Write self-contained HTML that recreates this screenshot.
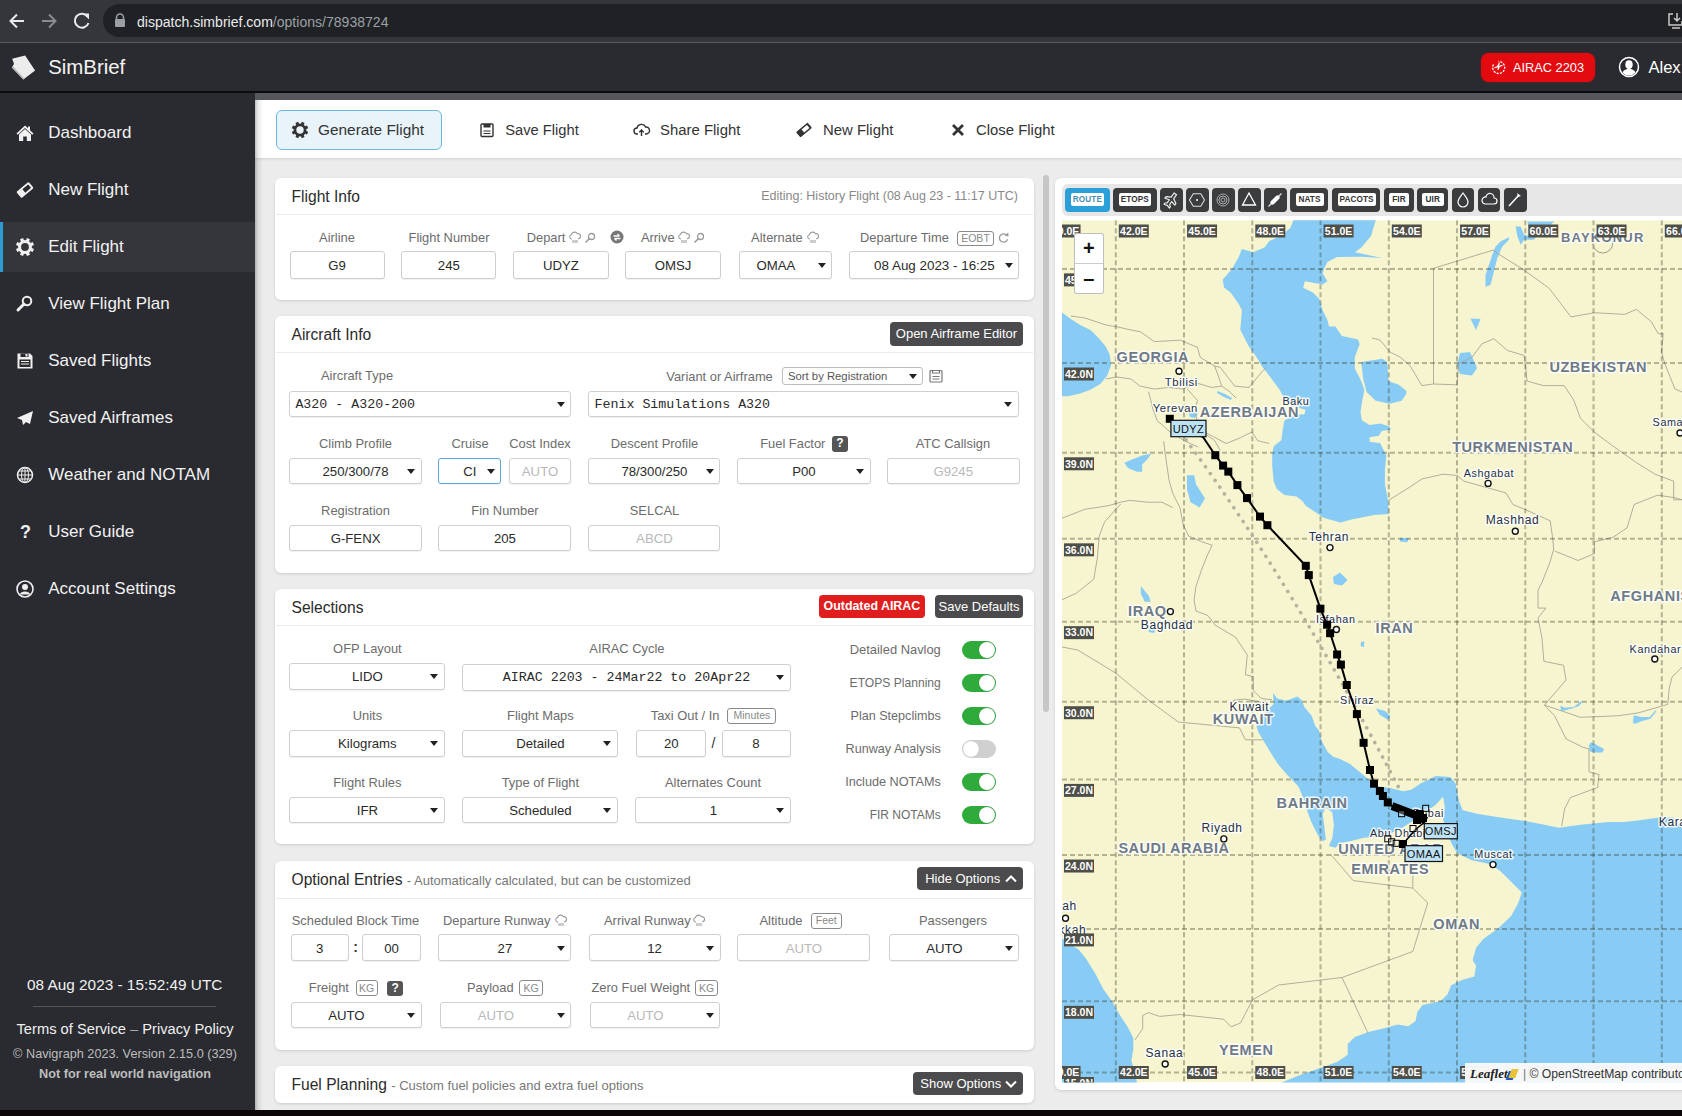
<!DOCTYPE html>
<html><head><meta charset="utf-8">
<style>
*{box-sizing:border-box;margin:0;padding:0}
html,body{width:1682px;height:1116px;overflow:hidden;background:#ececec;font-family:"Liberation Sans",sans-serif}
.a{position:absolute}
.card{background:#fff;border-radius:6px;box-shadow:0 1px 3px rgba(0,0,0,.14)}
svg{position:absolute;overflow:visible}
</style></head><body>
<div class="a" style="left:0px;top:0px;width:1682px;height:42px;background:#35363a"></div>
<div class="a" style="left:0px;top:42px;width:1682px;height:1px;background:#5b5c60"></div>
<div class="a" style="left:103px;top:4px;width:1620px;height:33px;border-radius:17px;background:#202124"></div>
<div class="a" style="left:137px;top:11.50px;height:20px;line-height:20px;font-size:14.05px;color:#e8eaed;white-space:nowrap;font-weight:normal;">dispatch.simbrief.com<span style="color:#9aa0a6">/options/78938724</span></div>
<svg style="left:0;top:0" width="100" height="42"><g stroke="#e8eaed" stroke-width="2" fill="none">
<path d="M24 21H11M17 14.5L10.5 21 17 27.5"/></g>
<g stroke="#8a8b8e" stroke-width="2" fill="none"><path d="M42 21H55M49 14.5L55.5 21 49 27.5"/></g>
<g stroke="#e8eaed" stroke-width="2" fill="none"><path d="M87.5 16.5A7 7 0 1 0 88.5 23"/></g><path d="M83 13.5L89 13.5 89 19.5Z" fill="#e8eaed"/>
</svg>
<svg style="left:114px;top:13px" width="12" height="15"><path d="M2.5 6V4.5a3.5 3.5 0 0 1 7 0V6" stroke="#9aa0a6" stroke-width="1.6" fill="none"/><rect x="1" y="6" width="10" height="8" rx="1" fill="#9aa0a6"/></svg>
<svg style="left:1664px;top:11px" width="20" height="20"><g stroke="#c8c8c8" stroke-width="1.5" fill="none"><path d="M9 3H5v11h13v-4"/><path d="M13 2v8M10 7l3 3 3-3"/><path d="M8 17h8"/></g></svg>
<div class="a" style="left:0px;top:43px;width:1682px;height:48px;background:#2a2b30"></div>
<div class="a" style="left:0px;top:91px;width:1682px;height:2px;background:#0b0b0b"></div>
<svg style="left:0;top:43px" width="48" height="48"><path d="M12.2 15.8L25.1 12.5 35.1 27.6 23.3 36.5 11.8 24.4 14 21z" fill="#ececec"/><path d="M11.8 24.4L23.3 36.5 24 35 13 23.5z" fill="#b8b8b8"/></svg>
<div class="a" style="left:48.2px;top:57.00px;height:20px;line-height:20px;font-size:20.4px;color:#f4f4f4;white-space:nowrap;font-weight:normal;">SimBrief</div>
<div class="a" style="left:1481px;top:53px;width:114px;height:29px;border-radius:8px;background:#e30b10;box-shadow:0 0 2px rgba(255,0,0,.5)"></div>
<svg style="left:1490px;top:59px" width="17" height="17"><path d="M3.5 5.5A6 6 0 1 0 8.5 2.5" stroke="#fff" stroke-width="1.3" fill="none" stroke-dasharray="2.2 1.2"/><path d="M4 8.5l3-1.2 2-3.8 1 0.3-1 3.2 3-1.2 0.8 1-3 1.2-1.5 3-1-0.2 0.6-2.5-3 1z" fill="#fff"/></svg>
<div class="a" style="left:1512.9px;top:57.50px;height:20px;line-height:20px;font-size:12.8px;color:#fff;white-space:nowrap;font-weight:normal;">AIRAC 2203</div>
<svg style="left:1618px;top:56px" width="22" height="22"><defs><clipPath id="uc"><circle cx="11" cy="11" r="8.6"/></clipPath></defs><circle cx="11" cy="11" r="9.5" stroke="#fff" stroke-width="1.5" fill="none"/><g clip-path="url(#uc)" fill="#fff"><ellipse cx="11" cy="8.6" rx="3.7" ry="4.4"/><ellipse cx="11" cy="18.8" rx="7.2" ry="6"/></g></svg>
<div class="a" style="left:1648.4px;top:57.60px;height:20px;line-height:20px;font-size:16.6px;color:#fff;white-space:nowrap;font-weight:normal;">Alex</div>
<div class="a" style="left:0px;top:93px;width:255px;height:1017px;background:#2a2b31"></div>
<div class="a" style="left:0px;top:222px;width:255px;height:50px;background:#35363c"></div>
<div class="a" style="left:0px;top:222px;width:3px;height:50px;background:#2d9bd8"></div>
<div class="a" style="left:48.2px;top:122.50px;height:20px;line-height:20px;font-size:17.0px;color:#f2f2f2;white-space:nowrap;font-weight:normal;">Dashboard</div>
<div class="a" style="left:48.2px;top:179.50px;height:20px;line-height:20px;font-size:17.0px;color:#f2f2f2;white-space:nowrap;font-weight:normal;">New Flight</div>
<div class="a" style="left:48.2px;top:236.50px;height:20px;line-height:20px;font-size:17.0px;color:#f2f2f2;white-space:nowrap;font-weight:normal;">Edit Flight</div>
<div class="a" style="left:48.2px;top:293.50px;height:20px;line-height:20px;font-size:17.0px;color:#f2f2f2;white-space:nowrap;font-weight:normal;">View Flight Plan</div>
<div class="a" style="left:48.2px;top:350.50px;height:20px;line-height:20px;font-size:17.0px;color:#f2f2f2;white-space:nowrap;font-weight:normal;">Saved Flights</div>
<div class="a" style="left:48.2px;top:407.50px;height:20px;line-height:20px;font-size:17.0px;color:#f2f2f2;white-space:nowrap;font-weight:normal;">Saved Airframes</div>
<div class="a" style="left:48.2px;top:464.50px;height:20px;line-height:20px;font-size:17.0px;color:#f2f2f2;white-space:nowrap;font-weight:normal;">Weather and NOTAM</div>
<div class="a" style="left:48.2px;top:521.50px;height:20px;line-height:20px;font-size:17.0px;color:#f2f2f2;white-space:nowrap;font-weight:normal;">User Guide</div>
<div class="a" style="left:48.2px;top:578.50px;height:20px;line-height:20px;font-size:17.0px;color:#f2f2f2;white-space:nowrap;font-weight:normal;">Account Settings</div>
<svg style="left:16px;top:123.5px" width="18" height="18"><path d="M9 1.5L0.5 9.5 1.8 10.8 9 4 16.2 10.8 17.5 9.5 14 6.2V2.5h-2v1.8z" fill="#f0f0f0"/><path d="M3 10.5L9 5l6 5.5V17h-4.2v-4.5H7.2V17H3z" fill="#f0f0f0"/></svg>
<svg style="left:16px;top:180.5px" width="18" height="18"><g transform="rotate(-40 9 9)"><rect x="1" y="5" width="16" height="8" rx="1.2" fill="#f0f0f0"/><rect x="7.5" y="6.8" width="7.5" height="4.4" fill="#2a2b31"/></g></svg>
<svg style="left:16px;top:237.5px" width="18" height="18"><path d="M15.90 9.00 L15.82 10.05 L17.99 10.97 L16.75 13.96 L14.57 13.08 L13.88 13.88 L13.08 14.57 L13.96 16.75 L10.97 17.99 L10.05 15.82 L9.00 15.90 L7.95 15.82 L7.03 17.99 L4.04 16.75 L4.92 14.57 L4.12 13.88 L3.43 13.08 L1.25 13.96 L0.01 10.97 L2.18 10.05 L2.10 9.00 L2.18 7.95 L0.01 7.03 L1.25 4.04 L3.43 4.92 L4.12 4.12 L4.92 3.43 L4.04 1.25 L7.03 0.01 L7.95 2.18 L9.00 2.10 L10.05 2.18 L10.97 0.01 L13.96 1.25 L13.08 3.43 L13.88 4.12 L14.57 4.92 L16.75 4.04 L17.99 7.03 L15.82 7.95Z M12.90 9.00 A3.9 3.9 0 1 0 5.10 9.00 A3.9 3.9 0 1 0 12.90 9.00Z" fill="#f0f0f0" fill-rule="evenodd"/></svg>
<svg style="left:16px;top:294.5px" width="18" height="18"><circle cx="11" cy="6" r="4.3" stroke="#f0f0f0" stroke-width="2" fill="none"/><path d="M8 9L2 15" stroke="#f0f0f0" stroke-width="3" stroke-linecap="round"/></svg>
<svg style="left:16px;top:351.5px" width="18" height="18"><path d="M1.5 1.5h12.5l2.5 2.5v12.5h-15z" fill="#f0f0f0"/><rect x="4.5" y="1.5" width="8" height="3.5" fill="#2a2b31"/><rect x="9.5" y="2" width="2" height="2.5" fill="#f0f0f0"/><rect x="3.5" y="7.5" width="11" height="7.5" fill="#2a2b31"/><path d="M5 9.5h8M5 12h8" stroke="#f0f0f0" stroke-width="1.2"/></svg>
<svg style="left:16px;top:408.5px" width="18" height="18"><path d="M17 2L1 9l5 2 1 5 3-3 4 2z" fill="#f0f0f0"/></svg>
<svg style="left:16px;top:465.5px" width="18" height="18"><circle cx="9" cy="9" r="7.5" stroke="#f0f0f0" stroke-width="1.5" fill="none"/><path d="M1.5 9h15M9 1.5v15M3 5h12M3 13h12" stroke="#f0f0f0" stroke-width="1"/><ellipse cx="9" cy="9" rx="3.5" ry="7.5" stroke="#f0f0f0" stroke-width="1" fill="none"/></svg>
<svg style="left:16px;top:522.5px" width="18" height="18"><text x="4" y="15" font-size="18" font-weight="bold" fill="#f0f0f0" font-family="Liberation Sans">?</text></svg>
<svg style="left:16px;top:579.5px" width="18" height="18"><circle cx="9" cy="9" r="8" stroke="#f0f0f0" stroke-width="1.6" fill="none"/><circle cx="9" cy="7" r="3" fill="#f0f0f0"/><path d="M3.5 14.5a6 5 0 0 1 11 0" fill="#f0f0f0"/></svg>
<div class="a" style="left:-0.30px;top:975.30px;width:250px;text-align:center;height:20px;line-height:20px;font-size:15.35px;color:#f0f0f0;white-space:nowrap;font-weight:normal;">08 Aug 2023 - 15:52:49 UTC</div>
<div class="a" style="left:33px;top:1006px;width:183px;height:1px;background:#55565b"></div>
<div class="a" style="left:0.10px;top:1019.00px;width:250px;text-align:center;height:20px;line-height:20px;font-size:14.7px;color:#f0f0f0;white-space:nowrap;font-weight:normal;">Terms of Service <span style="color:#aaa">–</span> Privacy Policy</div>
<div class="a" style="left:0.00px;top:1043.80px;width:250px;text-align:center;height:20px;line-height:20px;font-size:12.7px;color:#bdbdbd;white-space:nowrap;font-weight:normal;">© Navigraph 2023. Version 2.15.0 (329)</div>
<div class="a" style="left:0.00px;top:1063.50px;width:250px;text-align:center;height:20px;line-height:20px;font-size:12.7px;color:#bdbdbd;white-space:nowrap;font-weight:bold;">Not for real world navigation</div>
<div class="a" style="left:0px;top:1110px;width:1682px;height:6px;background:#0b0709"></div>
<div class="a" style="left:255px;top:93px;width:1427px;height:7px;background:#55575b"></div>
<div class="a" style="left:255px;top:100px;width:1427px;height:58px;background:#fff;box-shadow:0 1px 3px rgba(0,0,0,.12)"></div>
<div class="a" style="left:275.5px;top:109.5px;width:166px;height:40px;border:1.5px solid #6cb8dd;border-radius:6px;background:#e9f3fa"></div>
<div class="a" style="left:318px;top:120.00px;height:20px;line-height:20px;font-size:15.4px;color:#333;white-space:nowrap;font-weight:normal;">Generate Flight</div>
<div class="a" style="left:505.3px;top:120.00px;height:20px;line-height:20px;font-size:14.7px;color:#333;white-space:nowrap;font-weight:normal;">Save Flight</div>
<div class="a" style="left:660.1px;top:120.00px;height:20px;line-height:20px;font-size:14.9px;color:#333;white-space:nowrap;font-weight:normal;">Share Flight</div>
<div class="a" style="left:823px;top:120.00px;height:20px;line-height:20px;font-size:14.9px;color:#333;white-space:nowrap;font-weight:normal;">New Flight</div>
<div class="a" style="left:976px;top:120.00px;height:20px;line-height:20px;font-size:14.9px;color:#333;white-space:nowrap;font-weight:normal;">Close Flight</div>
<svg style="left:291px;top:121px" width="18" height="18"><path d="M15.40 9.00 L15.33 9.98 L17.20 10.80 L16.07 13.53 L14.16 12.78 L13.53 13.53 L12.78 14.16 L13.53 16.07 L10.80 17.20 L9.98 15.33 L9.00 15.40 L8.02 15.33 L7.20 17.20 L4.47 16.07 L5.22 14.16 L4.47 13.53 L3.84 12.78 L1.93 13.53 L0.80 10.80 L2.67 9.98 L2.60 9.00 L2.67 8.02 L0.80 7.20 L1.93 4.47 L3.84 5.22 L4.47 4.47 L5.22 3.84 L4.47 1.93 L7.20 0.80 L8.02 2.67 L9.00 2.60 L9.98 2.67 L10.80 0.80 L13.53 1.93 L12.78 3.84 L13.53 4.47 L14.16 5.22 L16.07 4.47 L17.20 7.20 L15.33 8.02Z M12.70 9.00 A3.7 3.7 0 1 0 5.30 9.00 A3.7 3.7 0 1 0 12.70 9.00Z" fill="#333" fill-rule="evenodd"/></svg>
<svg style="left:480px;top:123px" width="15" height="15"><rect x="1" y="1" width="12" height="12.5" rx="1" stroke="#333" stroke-width="1.4" fill="none"/><path d="M3.5 1h7v3.5h-7z" fill="#333"/><path d="M3.5 8h7M3.5 10.5h7" stroke="#333" stroke-width="1"/></svg>
<svg style="left:633px;top:122px" width="18" height="16"><path d="M5 12H4a3 3 0 0 1 0-6 4.5 4.5 0 0 1 8.5-1 3.5 3.5 0 0 1 1 7h-1.5" stroke="#333" stroke-width="1.4" fill="none"/><path d="M8.5 14V8M6.3 10.2l2.2-2.2 2.2 2.2" stroke="#333" stroke-width="1.4" fill="none"/></svg>
<svg style="left:796px;top:122px" width="16" height="16"><g transform="rotate(-40 8 8)"><rect x="0.5" y="4.5" width="15" height="7" rx="1" fill="#333"/><rect x="6.5" y="6" width="7" height="4" fill="#fff"/></g></svg>
<svg style="left:951px;top:123px" width="14" height="14"><path d="M2 2l10 10M12 2L2 12" stroke="#333" stroke-width="2.8"/></svg>
<div class="a card" style="left:275px;top:178px;width:759px;height:122px"></div>
<div class="a" style="left:276px;top:214px;width:757px;height:1px;background:#ebebeb"></div>
<div class="a" style="left:291.5px;top:186.80px;height:20px;line-height:20px;font-size:15.6px;color:#2b2b2b;white-space:nowrap;font-weight:normal;">Flight Info</div>
<div class="a" style="left:718.00px;top:185.70px;width:300px;text-align:right;height:20px;line-height:20px;font-size:12.5px;color:#888;white-space:nowrap;font-weight:normal;">Editing: History Flight (08 Aug 23 - 11:17 UTC)</div>
<div class="a" style="left:277.00px;top:227.70px;width:120px;text-align:center;height:20px;line-height:20px;font-size:12.9px;color:#6c6c6c;white-space:nowrap;font-weight:normal;">Airline</div>
<div class="a" style="left:389.00px;top:227.70px;width:120px;text-align:center;height:20px;line-height:20px;font-size:12.9px;color:#6c6c6c;white-space:nowrap;font-weight:normal;">Flight Number</div>
<div class="a" style="left:526.7px;top:227.70px;height:20px;line-height:20px;font-size:12.9px;color:#6c6c6c;white-space:nowrap;font-weight:normal;">Depart</div>
<div class="a" style="left:640.9px;top:227.70px;height:20px;line-height:20px;font-size:12.9px;color:#6c6c6c;white-space:nowrap;font-weight:normal;">Arrive</div>
<div class="a" style="left:751.1px;top:227.70px;height:20px;line-height:20px;font-size:12.9px;color:#6c6c6c;white-space:nowrap;font-weight:normal;">Alternate</div>
<div class="a" style="left:860px;top:227.70px;height:20px;line-height:20px;font-size:12.9px;color:#6c6c6c;white-space:nowrap;font-weight:normal;">Departure Time</div>
<div class="a" style="left:957px;top:231px;width:37px;height:15px;border:1px solid #8a8a8a;border-radius:3px;color:#8a8a8a;font-size:10.5px;line-height:13px;text-align:center;white-space:nowrap">EOBT</div>
<svg style="left:569px;top:232px" width="12" height="12"><path d="M3 7H2.5a2.3 2.3 0 0 1 0-4.5 3.3 3.3 0 0 1 6-.8 2.5 2.5 0 0 1 1 5H9" stroke="#999" stroke-width="1.1" fill="none"/><path d="M4 8v3M6 8v3M8 8v3" stroke="#999" stroke-width="1"/></svg>
<svg style="left:584px;top:232px" width="12" height="12"><circle cx="7.5" cy="4.5" r="3" stroke="#999" stroke-width="1.3" fill="none"/><path d="M5.5 6.5L1.5 10.5" stroke="#999" stroke-width="1.6"/></svg>
<svg style="left:678px;top:232px" width="12" height="12"><path d="M3 7H2.5a2.3 2.3 0 0 1 0-4.5 3.3 3.3 0 0 1 6-.8 2.5 2.5 0 0 1 1 5H9" stroke="#999" stroke-width="1.1" fill="none"/><path d="M4 8v3M6 8v3M8 8v3" stroke="#999" stroke-width="1"/></svg>
<svg style="left:693px;top:232px" width="12" height="12"><circle cx="7.5" cy="4.5" r="3" stroke="#999" stroke-width="1.3" fill="none"/><path d="M5.5 6.5L1.5 10.5" stroke="#999" stroke-width="1.6"/></svg>
<svg style="left:807px;top:232px" width="12" height="12"><path d="M3 7H2.5a2.3 2.3 0 0 1 0-4.5 3.3 3.3 0 0 1 6-.8 2.5 2.5 0 0 1 1 5H9" stroke="#999" stroke-width="1.1" fill="none"/><path d="M4 8v3M6 8v3M8 8v3" stroke="#999" stroke-width="1"/></svg>
<svg style="left:997px;top:231px" width="13" height="13"><path d="M10.3 5A4.2 4.2 0 1 0 10.6 8.3" stroke="#999" stroke-width="1.3" fill="none"/><path d="M7.6 4.8L11.6 5.6 11.2 1.6z" fill="#999"/></svg>
<svg style="left:610px;top:230px" width="14" height="14"><circle cx="7" cy="7" r="6.5" fill="#777"/><path d="M3.5 6h6M7.5 4l2 2M10.5 8.5h-6M6.5 10.5l-2-2" stroke="#fff" stroke-width="1.3" fill="none"/></svg>
<div class="a" style="left:289.5px;top:251px;width:95.0px;height:27.5px;border:1px solid #cfcfcf;border-radius:3px;background:#fff;box-shadow:0 1px 1px rgba(0,0,0,.06)"></div>
<div class="a" style="left:289.50px;top:255.55px;width:95.0px;text-align:center;height:20px;line-height:20px;font-size:13.2px;color:#2a2a2a;white-space:nowrap;font-weight:normal;">G9</div>
<div class="a" style="left:401.2px;top:251px;width:95.30000000000001px;height:27.5px;border:1px solid #cfcfcf;border-radius:3px;background:#fff;box-shadow:0 1px 1px rgba(0,0,0,.06)"></div>
<div class="a" style="left:401.20px;top:255.55px;width:95.30000000000001px;text-align:center;height:20px;line-height:20px;font-size:13.2px;color:#2a2a2a;white-space:nowrap;font-weight:normal;">245</div>
<div class="a" style="left:513.4px;top:251px;width:95.20000000000005px;height:27.5px;border:1px solid #cfcfcf;border-radius:3px;background:#fff;box-shadow:0 1px 1px rgba(0,0,0,.06)"></div>
<div class="a" style="left:513.40px;top:255.55px;width:95.20000000000005px;text-align:center;height:20px;line-height:20px;font-size:13.2px;color:#2a2a2a;white-space:nowrap;font-weight:normal;">UDYZ</div>
<div class="a" style="left:625.4px;top:251px;width:95.20000000000005px;height:27.5px;border:1px solid #cfcfcf;border-radius:3px;background:#fff;box-shadow:0 1px 1px rgba(0,0,0,.06)"></div>
<div class="a" style="left:625.40px;top:255.55px;width:95.20000000000005px;text-align:center;height:20px;line-height:20px;font-size:13.2px;color:#2a2a2a;white-space:nowrap;font-weight:normal;">OMSJ</div>
<div class="a" style="left:739.4px;top:251px;width:93.10000000000002px;height:27.5px;border:1px solid #cfcfcf;border-radius:3px;background:#fff;box-shadow:0 1px 1px rgba(0,0,0,.06)"></div>
<div class="a" style="left:729.40px;top:255.55px;width:93.10000000000002px;text-align:center;height:20px;line-height:20px;font-size:13.2px;color:#2a2a2a;white-space:nowrap;font-weight:normal;">OMAA</div>
<div class="a" style="left:817.5px;top:262.8px;width:0;height:0;border-left:4.5px solid transparent;border-right:4.5px solid transparent;border-top:5.5px solid #222"></div>
<div class="a" style="left:849.3px;top:251px;width:170.20000000000005px;height:27.5px;border:1px solid #cfcfcf;border-radius:3px;background:#fff;box-shadow:0 1px 1px rgba(0,0,0,.06)"></div>
<div class="a" style="left:849.30px;top:255.55px;width:170.20000000000005px;text-align:center;height:20px;line-height:20px;font-size:13.4px;color:#2a2a2a;white-space:nowrap;font-weight:normal;">08 Aug 2023 - 16:25</div>
<div class="a" style="left:1004.5px;top:262.8px;width:0;height:0;border-left:4.5px solid transparent;border-right:4.5px solid transparent;border-top:5.5px solid #222"></div>
<div class="a card" style="left:275px;top:316px;width:759px;height:256.5px"></div>
<div class="a" style="left:276px;top:352.3px;width:757px;height:1.0px;background:#ebebeb"></div>
<div class="a" style="left:291.5px;top:324.50px;height:20px;line-height:20px;font-size:15.6px;color:#2b2b2b;white-space:nowrap;font-weight:normal;">Aircraft Info</div>
<div class="a" style="left:890px;top:322px;width:133px;height:23.5px;background:#4b4b4d;border-radius:4px;color:#fff;font-size:13px;line-height:23.5px;text-align:center;white-space:nowrap;">Open Airframe Editor</div>
<div class="a" style="left:257.00px;top:365.80px;width:200px;text-align:center;height:20px;line-height:20px;font-size:12.9px;color:#6c6c6c;white-space:nowrap;font-weight:normal;">Aircraft Type</div>
<div class="a" style="left:572.80px;top:366.50px;width:200px;text-align:right;height:20px;line-height:20px;font-size:12.9px;color:#6c6c6c;white-space:nowrap;font-weight:normal;">Variant or Airframe</div>
<div class="a" style="left:782.3px;top:367.3px;width:141px;height:17.3px;border:1px solid #bdbdbd;border-radius:3px;background:#fff"></div>
<div class="a" style="left:788px;top:366.00px;height:20px;line-height:20px;font-size:11.3px;color:#555;white-space:nowrap;font-weight:normal;">Sort by Registration</div>
<div class="a" style="left:909px;top:374px;width:0;height:0;border-left:4px solid transparent;border-right:4px solid transparent;border-top:5px solid #222"></div>
<svg style="left:929px;top:369px" width="14" height="14"><rect x="1" y="1.5" width="12" height="11.5" rx="1" stroke="#777" stroke-width="1.2" fill="none"/><path d="M3.5 1v3h7V1" stroke="#777" stroke-width="1.2" fill="none"/><path d="M3.5 7.5h7M3.5 10h7" stroke="#777" stroke-width="1"/></svg>
<div class="a" style="left:289.4px;top:390.6px;width:282.1px;height:26.599999999999966px;border:1px solid #cfcfcf;border-radius:3px;background:#fff;box-shadow:0 1px 1px rgba(0,0,0,.06)"></div>
<div class="a" style="left:295.4px;top:394.70px;height:20px;line-height:20px;font-size:13.3px;color:#2a2a2a;white-space:nowrap;font-weight:normal;font-family:'Liberation Mono',monospace;">A320 - A320-200</div>
<div class="a" style="left:556.5px;top:401.9px;width:0;height:0;border-left:4.5px solid transparent;border-right:4.5px solid transparent;border-top:5.5px solid #222"></div>
<div class="a" style="left:588.4px;top:390.6px;width:430.80000000000007px;height:26.599999999999966px;border:1px solid #cfcfcf;border-radius:3px;background:#fff;box-shadow:0 1px 1px rgba(0,0,0,.06)"></div>
<div class="a" style="left:594.5px;top:394.70px;height:20px;line-height:20px;font-size:13.3px;color:#2a2a2a;white-space:nowrap;font-weight:normal;font-family:'Liberation Mono',monospace;">Fenix Simulations A320</div>
<div class="a" style="left:1004.2px;top:401.9px;width:0;height:0;border-left:4.5px solid transparent;border-right:4.5px solid transparent;border-top:5.5px solid #222"></div>
<div class="a" style="left:255.50px;top:433.80px;width:200px;text-align:center;height:20px;line-height:20px;font-size:12.9px;color:#6c6c6c;white-space:nowrap;font-weight:normal;">Climb Profile</div>
<div class="a" style="left:420.00px;top:433.80px;width:100px;text-align:center;height:20px;line-height:20px;font-size:12.9px;color:#6c6c6c;white-space:nowrap;font-weight:normal;">Cruise</div>
<div class="a" style="left:490.00px;top:433.80px;width:100px;text-align:center;height:20px;line-height:20px;font-size:12.9px;color:#6c6c6c;white-space:nowrap;font-weight:normal;">Cost Index</div>
<div class="a" style="left:554.50px;top:433.80px;width:200px;text-align:center;height:20px;line-height:20px;font-size:12.9px;color:#6c6c6c;white-space:nowrap;font-weight:normal;">Descent Profile</div>
<div class="a" style="left:760.2px;top:433.80px;height:20px;line-height:20px;font-size:12.9px;color:#6c6c6c;white-space:nowrap;font-weight:normal;">Fuel Factor</div>
<div class="a" style="left:832.3px;top:436.3px;width:15.400000000000091px;height:15.699999999999989px;background:#555;border-radius:3px;color:#fff;font-size:12px;font-weight:bold;line-height:15.699999999999989px;text-align:center">?</div>
<div class="a" style="left:853.00px;top:433.80px;width:200px;text-align:center;height:20px;line-height:20px;font-size:12.9px;color:#6c6c6c;white-space:nowrap;font-weight:normal;">ATC Callsign</div>
<div class="a" style="left:289.4px;top:457.6px;width:132.3px;height:26.799999999999955px;border:1px solid #cfcfcf;border-radius:3px;background:#fff;box-shadow:0 1px 1px rgba(0,0,0,.06)"></div>
<div class="a" style="left:289.40px;top:461.80px;width:132.3px;text-align:center;height:20px;line-height:20px;font-size:13.2px;color:#2a2a2a;white-space:nowrap;font-weight:normal;">250/300/78</div>
<div class="a" style="left:406.7px;top:469.0px;width:0;height:0;border-left:4.5px solid transparent;border-right:4.5px solid transparent;border-top:5.5px solid #222"></div>
<div class="a" style="left:438.4px;top:457.6px;width:63.10000000000002px;height:26.799999999999955px;border:1px solid #5aa9d6;border-radius:3px;background:#fff;box-shadow:0 1px 1px rgba(0,0,0,.06)"></div>
<div class="a" style="left:438.40px;top:461.80px;width:63.10000000000002px;text-align:center;height:20px;line-height:20px;font-size:13.2px;color:#2a2a2a;white-space:nowrap;font-weight:normal;">CI</div>
<div class="a" style="left:486.5px;top:469.0px;width:0;height:0;border-left:4.5px solid transparent;border-right:4.5px solid transparent;border-top:5.5px solid #222"></div>
<div class="a" style="left:508.6px;top:457.6px;width:62.89999999999998px;height:26.799999999999955px;border:1px solid #cfcfcf;border-radius:3px;background:#fff;box-shadow:0 1px 1px rgba(0,0,0,.06)"></div>
<div class="a" style="left:508.60px;top:461.80px;width:62.89999999999998px;text-align:center;height:20px;line-height:20px;font-size:13.2px;color:#b8b8b8;white-space:nowrap;font-weight:normal;">AUTO</div>
<div class="a" style="left:588.4px;top:457.6px;width:132.10000000000002px;height:26.799999999999955px;border:1px solid #cfcfcf;border-radius:3px;background:#fff;box-shadow:0 1px 1px rgba(0,0,0,.06)"></div>
<div class="a" style="left:588.40px;top:461.80px;width:132.10000000000002px;text-align:center;height:20px;line-height:20px;font-size:13.2px;color:#2a2a2a;white-space:nowrap;font-weight:normal;">78/300/250</div>
<div class="a" style="left:705.5px;top:469.0px;width:0;height:0;border-left:4.5px solid transparent;border-right:4.5px solid transparent;border-top:5.5px solid #222"></div>
<div class="a" style="left:737.3px;top:457.6px;width:133.30000000000007px;height:26.799999999999955px;border:1px solid #cfcfcf;border-radius:3px;background:#fff;box-shadow:0 1px 1px rgba(0,0,0,.06)"></div>
<div class="a" style="left:737.30px;top:461.80px;width:133.30000000000007px;text-align:center;height:20px;line-height:20px;font-size:13.2px;color:#2a2a2a;white-space:nowrap;font-weight:normal;">P00</div>
<div class="a" style="left:855.6px;top:469.0px;width:0;height:0;border-left:4.5px solid transparent;border-right:4.5px solid transparent;border-top:5.5px solid #222"></div>
<div class="a" style="left:887px;top:457.6px;width:132.5px;height:26.799999999999955px;border:1px solid #cfcfcf;border-radius:3px;background:#fff;box-shadow:0 1px 1px rgba(0,0,0,.06)"></div>
<div class="a" style="left:887.00px;top:461.80px;width:132.5px;text-align:center;height:20px;line-height:20px;font-size:13.2px;color:#b8b8b8;white-space:nowrap;font-weight:normal;">G9245</div>
<div class="a" style="left:255.50px;top:500.80px;width:200px;text-align:center;height:20px;line-height:20px;font-size:12.9px;color:#6c6c6c;white-space:nowrap;font-weight:normal;">Registration</div>
<div class="a" style="left:405.00px;top:500.80px;width:200px;text-align:center;height:20px;line-height:20px;font-size:12.9px;color:#6c6c6c;white-space:nowrap;font-weight:normal;">Fin Number</div>
<div class="a" style="left:554.50px;top:500.80px;width:200px;text-align:center;height:20px;line-height:20px;font-size:12.9px;color:#6c6c6c;white-space:nowrap;font-weight:normal;">SELCAL</div>
<div class="a" style="left:289.4px;top:524.6px;width:132.3px;height:26.600000000000023px;border:1px solid #cfcfcf;border-radius:3px;background:#fff;box-shadow:0 1px 1px rgba(0,0,0,.06)"></div>
<div class="a" style="left:289.40px;top:528.70px;width:132.3px;text-align:center;height:20px;line-height:20px;font-size:13.2px;color:#2a2a2a;white-space:nowrap;font-weight:normal;">G-FENX</div>
<div class="a" style="left:438.4px;top:524.6px;width:133.10000000000002px;height:26.600000000000023px;border:1px solid #cfcfcf;border-radius:3px;background:#fff;box-shadow:0 1px 1px rgba(0,0,0,.06)"></div>
<div class="a" style="left:438.40px;top:528.70px;width:133.10000000000002px;text-align:center;height:20px;line-height:20px;font-size:13.2px;color:#2a2a2a;white-space:nowrap;font-weight:normal;">205</div>
<div class="a" style="left:588.4px;top:524.6px;width:132.10000000000002px;height:26.600000000000023px;border:1px solid #cfcfcf;border-radius:3px;background:#fff;box-shadow:0 1px 1px rgba(0,0,0,.06)"></div>
<div class="a" style="left:588.40px;top:528.70px;width:132.10000000000002px;text-align:center;height:20px;line-height:20px;font-size:13.2px;color:#b8b8b8;white-space:nowrap;font-weight:normal;">ABCD</div>
<div class="a card" style="left:275px;top:589.2px;width:759px;height:255.29999999999995px"></div>
<div class="a" style="left:276px;top:625.2px;width:757px;height:1.0px;background:#ebebeb"></div>
<div class="a" style="left:291.5px;top:597.50px;height:20px;line-height:20px;font-size:15.6px;color:#2b2b2b;white-space:nowrap;font-weight:normal;">Selections</div>
<div class="a" style="left:819.1px;top:595.3px;width:105.60000000000002px;height:23.0px;background:#e01e1e;border-radius:4px;color:#fff;font-size:12.4px;line-height:23.0px;text-align:center;white-space:nowrap;font-weight:bold">Outdated AIRAC</div>
<div class="a" style="left:935.2px;top:595.3px;width:87.69999999999993px;height:23.0px;background:#4b4b4d;border-radius:4px;color:#fff;font-size:13px;line-height:23.0px;text-align:center;white-space:nowrap;">Save Defaults</div>
<div class="a" style="left:267.40px;top:639.00px;width:200px;text-align:center;height:20px;line-height:20px;font-size:12.9px;color:#6c6c6c;white-space:nowrap;font-weight:normal;">OFP Layout</div>
<div class="a" style="left:526.90px;top:639.00px;width:200px;text-align:center;height:20px;line-height:20px;font-size:12.9px;color:#6c6c6c;white-space:nowrap;font-weight:normal;">AIRAC Cycle</div>
<div class="a" style="left:289.4px;top:662.5px;width:156.0px;height:27.100000000000023px;border:1px solid #cfcfcf;border-radius:3px;background:#fff;box-shadow:0 1px 1px rgba(0,0,0,.06)"></div>
<div class="a" style="left:289.40px;top:666.85px;width:156.0px;text-align:center;height:20px;line-height:20px;font-size:13.2px;color:#2a2a2a;white-space:nowrap;font-weight:normal;">LIDO</div>
<div class="a" style="left:430.4px;top:674.0px;width:0;height:0;border-left:4.5px solid transparent;border-right:4.5px solid transparent;border-top:5.5px solid #222"></div>
<div class="a" style="left:462.4px;top:663.5px;width:328.9px;height:27.100000000000023px;border:1px solid #cfcfcf;border-radius:3px;background:#fff;box-shadow:0 1px 1px rgba(0,0,0,.06)"></div>
<div class="a" style="left:502.8px;top:667.85px;height:20px;line-height:20px;font-size:13.3px;color:#2a2a2a;white-space:nowrap;font-weight:normal;font-family:'Liberation Mono',monospace;">AIRAC 2203 - 24Mar22 to 20Apr22</div>
<div class="a" style="left:776.3px;top:675.0px;width:0;height:0;border-left:4.5px solid transparent;border-right:4.5px solid transparent;border-top:5.5px solid #222"></div>
<div class="a" style="left:267.40px;top:706.00px;width:200px;text-align:center;height:20px;line-height:20px;font-size:12.9px;color:#6c6c6c;white-space:nowrap;font-weight:normal;">Units</div>
<div class="a" style="left:440.40px;top:706.00px;width:200px;text-align:center;height:20px;line-height:20px;font-size:12.9px;color:#6c6c6c;white-space:nowrap;font-weight:normal;">Flight Maps</div>
<div class="a" style="left:650.7px;top:706.00px;height:20px;line-height:20px;font-size:12.9px;color:#6c6c6c;white-space:nowrap;font-weight:normal;">Taxi Out / In</div>
<div class="a" style="left:727.4px;top:708.3px;width:49.0px;height:15.400000000000091px;border:1px solid #8a8a8a;border-radius:3px;color:#8a8a8a;font-size:10.5px;line-height:13.400000000000091px;text-align:center;white-space:nowrap">Minutes</div>
<div class="a" style="left:289.4px;top:729.5px;width:156.0px;height:27.100000000000023px;border:1px solid #cfcfcf;border-radius:3px;background:#fff;box-shadow:0 1px 1px rgba(0,0,0,.06)"></div>
<div class="a" style="left:289.40px;top:733.85px;width:156.0px;text-align:center;height:20px;line-height:20px;font-size:13.2px;color:#2a2a2a;white-space:nowrap;font-weight:normal;">Kilograms</div>
<div class="a" style="left:430.4px;top:741.0px;width:0;height:0;border-left:4.5px solid transparent;border-right:4.5px solid transparent;border-top:5.5px solid #222"></div>
<div class="a" style="left:462.4px;top:729.5px;width:156.0px;height:27.100000000000023px;border:1px solid #cfcfcf;border-radius:3px;background:#fff;box-shadow:0 1px 1px rgba(0,0,0,.06)"></div>
<div class="a" style="left:462.40px;top:733.85px;width:156.0px;text-align:center;height:20px;line-height:20px;font-size:13.2px;color:#2a2a2a;white-space:nowrap;font-weight:normal;">Detailed</div>
<div class="a" style="left:603.4px;top:741.0px;width:0;height:0;border-left:4.5px solid transparent;border-right:4.5px solid transparent;border-top:5.5px solid #222"></div>
<div class="a" style="left:636.1px;top:729.5px;width:70.29999999999995px;height:27.100000000000023px;border:1px solid #cfcfcf;border-radius:3px;background:#fff;box-shadow:0 1px 1px rgba(0,0,0,.06)"></div>
<div class="a" style="left:636.10px;top:733.85px;width:70.29999999999995px;text-align:center;height:20px;line-height:20px;font-size:13.2px;color:#2a2a2a;white-space:nowrap;font-weight:normal;">20</div>
<div class="a" style="left:703.50px;top:733.00px;width:20px;text-align:center;height:20px;line-height:20px;font-size:14px;color:#333;white-space:nowrap;font-weight:normal;">/</div>
<div class="a" style="left:721.5px;top:729.5px;width:69.0px;height:27.100000000000023px;border:1px solid #cfcfcf;border-radius:3px;background:#fff;box-shadow:0 1px 1px rgba(0,0,0,.06)"></div>
<div class="a" style="left:721.50px;top:733.85px;width:69.0px;text-align:center;height:20px;line-height:20px;font-size:13.2px;color:#2a2a2a;white-space:nowrap;font-weight:normal;">8</div>
<div class="a" style="left:267.40px;top:772.80px;width:200px;text-align:center;height:20px;line-height:20px;font-size:12.9px;color:#6c6c6c;white-space:nowrap;font-weight:normal;">Flight Rules</div>
<div class="a" style="left:440.40px;top:772.80px;width:200px;text-align:center;height:20px;line-height:20px;font-size:12.9px;color:#6c6c6c;white-space:nowrap;font-weight:normal;">Type of Flight</div>
<div class="a" style="left:613.00px;top:772.80px;width:200px;text-align:center;height:20px;line-height:20px;font-size:12.9px;color:#6c6c6c;white-space:nowrap;font-weight:normal;">Alternates Count</div>
<div class="a" style="left:289.4px;top:796.6px;width:156.0px;height:26.799999999999955px;border:1px solid #cfcfcf;border-radius:3px;background:#fff;box-shadow:0 1px 1px rgba(0,0,0,.06)"></div>
<div class="a" style="left:289.40px;top:800.80px;width:156.0px;text-align:center;height:20px;line-height:20px;font-size:13.2px;color:#2a2a2a;white-space:nowrap;font-weight:normal;">IFR</div>
<div class="a" style="left:430.4px;top:808.0px;width:0;height:0;border-left:4.5px solid transparent;border-right:4.5px solid transparent;border-top:5.5px solid #222"></div>
<div class="a" style="left:462.4px;top:796.6px;width:156.0px;height:26.799999999999955px;border:1px solid #cfcfcf;border-radius:3px;background:#fff;box-shadow:0 1px 1px rgba(0,0,0,.06)"></div>
<div class="a" style="left:462.40px;top:800.80px;width:156.0px;text-align:center;height:20px;line-height:20px;font-size:13.2px;color:#2a2a2a;white-space:nowrap;font-weight:normal;">Scheduled</div>
<div class="a" style="left:603.4px;top:808.0px;width:0;height:0;border-left:4.5px solid transparent;border-right:4.5px solid transparent;border-top:5.5px solid #222"></div>
<div class="a" style="left:635.3px;top:796.6px;width:156.0px;height:26.799999999999955px;border:1px solid #cfcfcf;border-radius:3px;background:#fff;box-shadow:0 1px 1px rgba(0,0,0,.06)"></div>
<div class="a" style="left:635.30px;top:800.80px;width:156.0px;text-align:center;height:20px;line-height:20px;font-size:13.2px;color:#2a2a2a;white-space:nowrap;font-weight:normal;">1</div>
<div class="a" style="left:776.3px;top:808.0px;width:0;height:0;border-left:4.5px solid transparent;border-right:4.5px solid transparent;border-top:5.5px solid #222"></div>
<div class="a" style="left:740.80px;top:639.80px;width:200px;text-align:right;height:20px;line-height:20px;font-size:12.9px;color:#6c6c6c;white-space:nowrap;font-weight:normal;">Detailed Navlog</div>
<div class="a" style="left:962px;top:640.8px;width:34px;height:18px;border-radius:9px;background:#2eab3a"></div>
<div class="a" style="left:979px;top:641.8px;width:16px;height:16px;border-radius:50%;background:#fff;box-shadow:0 0 1px rgba(0,0,0,.3)"></div>
<div class="a" style="left:740.80px;top:672.80px;width:200px;text-align:right;height:20px;line-height:20px;font-size:12.1px;color:#6c6c6c;white-space:nowrap;font-weight:normal;">ETOPS Planning</div>
<div class="a" style="left:962px;top:673.8px;width:34px;height:18px;border-radius:9px;background:#2eab3a"></div>
<div class="a" style="left:979px;top:674.8px;width:16px;height:16px;border-radius:50%;background:#fff;box-shadow:0 0 1px rgba(0,0,0,.3)"></div>
<div class="a" style="left:740.80px;top:705.80px;width:200px;text-align:right;height:20px;line-height:20px;font-size:12.6px;color:#6c6c6c;white-space:nowrap;font-weight:normal;">Plan Stepclimbs</div>
<div class="a" style="left:962px;top:706.8px;width:34px;height:18px;border-radius:9px;background:#2eab3a"></div>
<div class="a" style="left:979px;top:707.8px;width:16px;height:16px;border-radius:50%;background:#fff;box-shadow:0 0 1px rgba(0,0,0,.3)"></div>
<div class="a" style="left:740.80px;top:738.80px;width:200px;text-align:right;height:20px;line-height:20px;font-size:12.6px;color:#6c6c6c;white-space:nowrap;font-weight:normal;">Runway Analysis</div>
<div class="a" style="left:962px;top:739.8px;width:34px;height:18px;border-radius:9px;background:#d0d0d0"></div>
<div class="a" style="left:963px;top:740.8px;width:16px;height:16px;border-radius:50%;background:#fff;box-shadow:0 0 1px rgba(0,0,0,.3)"></div>
<div class="a" style="left:740.80px;top:771.80px;width:200px;text-align:right;height:20px;line-height:20px;font-size:12.7px;color:#6c6c6c;white-space:nowrap;font-weight:normal;">Include NOTAMs</div>
<div class="a" style="left:962px;top:772.8px;width:34px;height:18px;border-radius:9px;background:#2eab3a"></div>
<div class="a" style="left:979px;top:773.8px;width:16px;height:16px;border-radius:50%;background:#fff;box-shadow:0 0 1px rgba(0,0,0,.3)"></div>
<div class="a" style="left:740.80px;top:804.80px;width:200px;text-align:right;height:20px;line-height:20px;font-size:12.0px;color:#6c6c6c;white-space:nowrap;font-weight:normal;">FIR NOTAMs</div>
<div class="a" style="left:962px;top:805.8px;width:34px;height:18px;border-radius:9px;background:#2eab3a"></div>
<div class="a" style="left:979px;top:806.8px;width:16px;height:16px;border-radius:50%;background:#fff;box-shadow:0 0 1px rgba(0,0,0,.3)"></div>
<div class="a card" style="left:275px;top:861.2px;width:759px;height:188.39999999999986px"></div>
<div class="a" style="left:276px;top:897.7px;width:757px;height:1.0px;background:#ebebeb"></div>
<div class="a" style="left:291.5px;top:869.50px;height:20px;line-height:20px;font-size:15.6px;color:#2b2b2b;white-space:nowrap;font-weight:normal;">Optional Entries <span style="font-size:13px;color:#777">- Automatically calculated, but can be customized</span></div>
<div class="a" style="left:917px;top:867.4px;width:105.89999999999998px;height:23.0px;background:#4b4b4d;border-radius:4px;color:#fff;font-size:13px;line-height:23.0px;text-align:center;white-space:nowrap;">Hide Options &nbsp;&nbsp;&nbsp;</div>
<svg style="left:1004px;top:873px" width="14" height="12"><path d="M2 8.5l5-5 5 5" stroke="#fff" stroke-width="2" fill="none"/></svg>
<div class="a" style="left:255.50px;top:910.80px;width:200px;text-align:center;height:20px;line-height:20px;font-size:12.9px;color:#6c6c6c;white-space:nowrap;font-weight:normal;">Scheduled Block Time</div>
<div class="a" style="left:443px;top:910.80px;height:20px;line-height:20px;font-size:12.9px;color:#6c6c6c;white-space:nowrap;font-weight:normal;">Departure Runway</div>
<svg style="left:555px;top:915px" width="12" height="12"><path d="M3 7H2.5a2.3 2.3 0 0 1 0-4.5 3.3 3.3 0 0 1 6-.8 2.5 2.5 0 0 1 1 5H9" stroke="#999" stroke-width="1.1" fill="none"/><path d="M4 8v3M6 8v3M8 8v3" stroke="#999" stroke-width="1"/></svg>
<div class="a" style="left:604px;top:910.80px;height:20px;line-height:20px;font-size:12.9px;color:#6c6c6c;white-space:nowrap;font-weight:normal;">Arrival Runway</div>
<svg style="left:693px;top:915px" width="12" height="12"><path d="M3 7H2.5a2.3 2.3 0 0 1 0-4.5 3.3 3.3 0 0 1 6-.8 2.5 2.5 0 0 1 1 5H9" stroke="#999" stroke-width="1.1" fill="none"/><path d="M4 8v3M6 8v3M8 8v3" stroke="#999" stroke-width="1"/></svg>
<div class="a" style="left:759.5px;top:910.80px;height:20px;line-height:20px;font-size:12.9px;color:#6c6c6c;white-space:nowrap;font-weight:normal;">Altitude</div>
<div class="a" style="left:810.5px;top:913px;width:31.5px;height:15.5px;border:1px solid #8a8a8a;border-radius:3px;color:#8a8a8a;font-size:10.5px;line-height:13.5px;text-align:center;white-space:nowrap">Feet</div>
<div class="a" style="left:853.00px;top:910.80px;width:200px;text-align:center;height:20px;line-height:20px;font-size:12.9px;color:#6c6c6c;white-space:nowrap;font-weight:normal;">Passengers</div>
<div class="a" style="left:290.5px;top:934.1px;width:58.19999999999999px;height:27.199999999999932px;border:1px solid #cfcfcf;border-radius:3px;background:#fff;box-shadow:0 1px 1px rgba(0,0,0,.06)"></div>
<div class="a" style="left:290.50px;top:938.50px;width:58.19999999999999px;text-align:center;height:20px;line-height:20px;font-size:13.2px;color:#2a2a2a;white-space:nowrap;font-weight:normal;">3</div>
<div class="a" style="left:345.50px;top:937.00px;width:20px;text-align:center;height:20px;line-height:20px;font-size:14px;color:#333;white-space:nowrap;font-weight:bold;">:</div>
<div class="a" style="left:362.3px;top:934.1px;width:58.39999999999998px;height:27.199999999999932px;border:1px solid #cfcfcf;border-radius:3px;background:#fff;box-shadow:0 1px 1px rgba(0,0,0,.06)"></div>
<div class="a" style="left:362.30px;top:938.50px;width:58.39999999999998px;text-align:center;height:20px;line-height:20px;font-size:13.2px;color:#2a2a2a;white-space:nowrap;font-weight:normal;">00</div>
<div class="a" style="left:438.3px;top:934.1px;width:133.2px;height:27.199999999999932px;border:1px solid #cfcfcf;border-radius:3px;background:#fff;box-shadow:0 1px 1px rgba(0,0,0,.06)"></div>
<div class="a" style="left:438.30px;top:938.50px;width:133.2px;text-align:center;height:20px;line-height:20px;font-size:13.2px;color:#2a2a2a;white-space:nowrap;font-weight:normal;">27</div>
<div class="a" style="left:556.5px;top:945.7px;width:0;height:0;border-left:4.5px solid transparent;border-right:4.5px solid transparent;border-top:5.5px solid #222"></div>
<div class="a" style="left:588.5px;top:934.1px;width:132.0px;height:27.199999999999932px;border:1px solid #cfcfcf;border-radius:3px;background:#fff;box-shadow:0 1px 1px rgba(0,0,0,.06)"></div>
<div class="a" style="left:588.50px;top:938.50px;width:132.0px;text-align:center;height:20px;line-height:20px;font-size:13.2px;color:#2a2a2a;white-space:nowrap;font-weight:normal;">12</div>
<div class="a" style="left:705.5px;top:945.7px;width:0;height:0;border-left:4.5px solid transparent;border-right:4.5px solid transparent;border-top:5.5px solid #222"></div>
<div class="a" style="left:737.3px;top:934.1px;width:133.20000000000005px;height:27.199999999999932px;border:1px solid #cfcfcf;border-radius:3px;background:#fff;box-shadow:0 1px 1px rgba(0,0,0,.06)"></div>
<div class="a" style="left:737.30px;top:938.50px;width:133.20000000000005px;text-align:center;height:20px;line-height:20px;font-size:13.2px;color:#b8b8b8;white-space:nowrap;font-weight:normal;">AUTO</div>
<div class="a" style="left:889.2px;top:934.1px;width:130.29999999999995px;height:27.199999999999932px;border:1px solid #cfcfcf;border-radius:3px;background:#fff;box-shadow:0 1px 1px rgba(0,0,0,.06)"></div>
<div class="a" style="left:879.20px;top:938.50px;width:130.29999999999995px;text-align:center;height:20px;line-height:20px;font-size:13.2px;color:#2a2a2a;white-space:nowrap;font-weight:normal;">AUTO</div>
<div class="a" style="left:1004.5px;top:945.7px;width:0;height:0;border-left:4.5px solid transparent;border-right:4.5px solid transparent;border-top:5.5px solid #222"></div>
<div class="a" style="left:308.8px;top:977.80px;height:20px;line-height:20px;font-size:12.9px;color:#6c6c6c;white-space:nowrap;font-weight:normal;">Freight</div>
<div class="a" style="left:355.6px;top:980px;width:22.0px;height:16px;border:1px solid #8a8a8a;border-radius:3px;color:#8a8a8a;font-size:10.5px;line-height:14px;text-align:center;white-space:nowrap">KG</div>
<div class="a" style="left:387.4px;top:980.6px;width:15.400000000000034px;height:15.799999999999955px;background:#555;border-radius:3px;color:#fff;font-size:12px;font-weight:bold;line-height:15.799999999999955px;text-align:center">?</div>
<div class="a" style="left:467px;top:977.80px;height:20px;line-height:20px;font-size:12.9px;color:#6c6c6c;white-space:nowrap;font-weight:normal;">Payload</div>
<div class="a" style="left:519px;top:980px;width:24px;height:16px;border:1px solid #8a8a8a;border-radius:3px;color:#8a8a8a;font-size:10.5px;line-height:14px;text-align:center;white-space:nowrap">KG</div>
<div class="a" style="left:591.5px;top:977.80px;height:20px;line-height:20px;font-size:12.9px;color:#6c6c6c;white-space:nowrap;font-weight:normal;">Zero Fuel Weight</div>
<div class="a" style="left:695px;top:980px;width:23px;height:16px;border:1px solid #8a8a8a;border-radius:3px;color:#8a8a8a;font-size:10.5px;line-height:14px;text-align:center;white-space:nowrap">KG</div>
<div class="a" style="left:291.2px;top:1001.6px;width:130.40000000000003px;height:26.699999999999932px;border:1px solid #cfcfcf;border-radius:3px;background:#fff;box-shadow:0 1px 1px rgba(0,0,0,.06)"></div>
<div class="a" style="left:281.20px;top:1005.75px;width:130.40000000000003px;text-align:center;height:20px;line-height:20px;font-size:13.2px;color:#2a2a2a;white-space:nowrap;font-weight:normal;">AUTO</div>
<div class="a" style="left:406.6px;top:1013.0px;width:0;height:0;border-left:4.5px solid transparent;border-right:4.5px solid transparent;border-top:5.5px solid #222"></div>
<div class="a" style="left:440.2px;top:1001.6px;width:131.3px;height:26.699999999999932px;border:1px solid #cfcfcf;border-radius:3px;background:#fff;box-shadow:0 1px 1px rgba(0,0,0,.06)"></div>
<div class="a" style="left:430.20px;top:1005.75px;width:131.3px;text-align:center;height:20px;line-height:20px;font-size:13.2px;color:#b8b8b8;white-space:nowrap;font-weight:normal;">AUTO</div>
<div class="a" style="left:556.5px;top:1013.0px;width:0;height:0;border-left:4.5px solid transparent;border-right:4.5px solid transparent;border-top:5.5px solid #222"></div>
<div class="a" style="left:590.4px;top:1001.6px;width:130.10000000000002px;height:26.699999999999932px;border:1px solid #cfcfcf;border-radius:3px;background:#fff;box-shadow:0 1px 1px rgba(0,0,0,.06)"></div>
<div class="a" style="left:580.40px;top:1005.75px;width:130.10000000000002px;text-align:center;height:20px;line-height:20px;font-size:13.2px;color:#b8b8b8;white-space:nowrap;font-weight:normal;">AUTO</div>
<div class="a" style="left:705.5px;top:1013.0px;width:0;height:0;border-left:4.5px solid transparent;border-right:4.5px solid transparent;border-top:5.5px solid #222"></div>
<div class="a card" style="left:275px;top:1066.4px;width:759px;height:36.299999999999955px"></div>
<div class="a" style="left:291.5px;top:1074.50px;height:20px;line-height:20px;font-size:15.6px;color:#2b2b2b;white-space:nowrap;font-weight:normal;">Fuel Planning <span style="font-size:13px;color:#777">- Custom fuel policies and extra fuel options</span></div>
<div class="a" style="left:913.2px;top:1072.4px;width:109.69999999999993px;height:23.0px;background:#4b4b4d;border-radius:4px;color:#fff;font-size:13px;line-height:23.0px;text-align:center;white-space:nowrap;">Show Options &nbsp;&nbsp;&nbsp;</div>
<svg style="left:1004px;top:1078px" width="14" height="12"><path d="M2 3.5l5 5 5-5" stroke="#fff" stroke-width="2" fill="none"/></svg>
<div class="a" style="left:1043px;top:175px;width:6px;height:537px;background:#c6c6c6;border-radius:3px"></div>
<div class="a" style="left:255px;top:100px;width:8px;height:1010px;background:linear-gradient(to right,rgba(60,65,75,.35),rgba(60,65,75,.12) 35%,rgba(60,65,75,0))"></div>
<div class="a" style="left:1055px;top:178px;width:640px;height:911.5px;background:#fff;border-radius:6px;box-shadow:0 1px 3px rgba(0,0,0,.14)"></div>
<div class="a" style="left:1061.8px;top:184px;width:640px;height:32px;background:#e6e6e6;border-radius:6px"></div>
<svg style="left:0;top:0" width="1682" height="1116" viewBox="0 0 1682 1116"><defs><clipPath id="mc"><rect x="1062" y="220.3" width="620" height="862.2"/></clipPath></defs><g clip-path="url(#mc)">
<rect x="1062" y="220.3" width="620" height="862.2" fill="#f6f5cf"/>
<polygon points="1040.0,300.0 1061.6,312.2 1070.8,318.9 1080.2,324.9 1090.9,330.3 1099.0,338.4 1105.7,346.5 1109.7,354.5 1111.1,365.3 1107.0,376.0 1100.3,384.1 1090.9,389.5 1080.2,393.5 1068.1,396.2 1040.0,397.0" fill="#88ccf6"/>
<polygon points="1290.0,200.0 1293.5,220.0 1290.3,228.1 1280.6,236.1 1269.4,241.0 1264.5,247.4 1253.2,252.3 1241.9,249.0 1238.7,257.1 1232.3,268.4 1222.6,279.7 1224.2,287.7 1230.6,292.6 1238.7,303.9 1241.9,310.3 1240.3,329.7 1248.4,345.8 1256.5,357.1 1261.3,365.2 1271.0,378.1 1279.8,390.0 1284.4,399.1 1295.0,406.8 1305.7,409.8 1304.2,414.4 1295.0,414.4 1284.4,420.5 1282.8,429.6 1281.3,440.3 1273.7,446.3 1272.2,454.0 1272.2,466.1 1273.7,481.4 1276.8,489.0 1284.4,495.1 1296.5,496.6 1302.6,501.2 1305.7,505.7 1314.8,511.8 1324.0,517.9 1340.7,522.5 1351.4,519.4 1366.6,516.4 1374.2,514.9 1388.7,514.1 1388.7,514.1 1387.9,499.6 1384.9,484.4 1384.9,469.2 1386.4,455.5 1383.3,449.4 1380.3,443.3 1369.6,441.8 1369.6,437.2 1378.8,435.7 1381.8,431.1 1391.0,429.6 1389.4,426.5 1380.3,423.5 1369.6,425.0 1362.0,420.5 1360.5,412.8 1362.0,402.2 1364.3,390.0 1361.3,381.3 1354.8,368.4 1354.8,357.1 1359.7,344.2 1358.1,339.4 1341.9,336.1 1335.5,326.5 1329.0,326.5 1327.4,320.0 1322.6,310.3 1319.4,299.0 1312.9,292.6 1303.2,287.7 1304.8,281.3 1322.6,284.5 1327.4,281.3 1322.6,273.2 1324.2,268.4 1327.4,261.9 1337.1,257.1 1361.3,256.8 1382.3,257.9 1354.8,252.3 1361.3,247.4 1371.0,236.1 1375.8,220.0 1380.0,200.0" fill="#88ccf6"/>
<polygon points="1361.3,361.9 1382.3,358.7 1387.1,361.9 1388.7,381.3 1398.4,384.5 1406.5,391.0 1406.2,394.0 1401.6,400.7 1389.4,403.7 1375.7,400.7 1366.6,392.0 1363.0,378.0" fill="#88ccf6"/>
<polygon points="1273.0,692.9 1277.3,698.6 1286.6,700.8 1297.3,696.5 1301.6,700.0 1304.5,707.2 1311.7,715.8 1315.3,725.9 1318.9,730.2 1321.7,740.9 1327.5,751.7 1333.2,756.7 1340.0,758.9 1350.0,763.9 1359.7,771.9 1369.4,780.0 1379.0,786.5 1390.3,788.1 1403.2,791.3 1411.3,789.7 1421.0,783.2 1435.8,776.1 1450.2,777.0 1455.5,783.3 1459.1,801.2 1462.7,810.2 1477.0,813.7 1498.5,817.3 1525.4,820.9 1544.5,824.8 1558.9,827.7 1580.4,824.8 1609.0,821.9 1623.4,821.9 1637.7,820.5 1659.2,817.6 1673.5,817.6 1682.0,828.0 1700.0,830.0 1700.0,1100.0 1250.0,1100.0 1281.7,1082.5 1301.3,1074.5 1322.7,1067.3 1337.0,1062.0 1347.7,1054.8 1347.7,1044.1 1354.8,1037.0 1369.1,1031.7 1385.2,1028.1 1397.6,1024.5 1408.3,1026.3 1415.5,1021.0 1417.3,1012.0 1422.6,1004.9 1440.4,1001.3 1447.6,994.2 1451.2,985.3 1461.9,979.9 1474.3,976.4 1476.1,965.7 1472.6,960.3 1476.1,947.8 1483.3,938.9 1495.7,930.0 1500.3,926.6 1511.1,915.9 1518.2,903.3 1521.8,892.6 1511.1,881.8 1500.3,871.1 1489.6,863.9 1471.7,860.3 1457.3,853.2 1452.0,844.2 1446.6,831.7 1443.0,819.1 1444.8,806.6 1443.0,796.7 1435.8,804.8 1429.9,808.9 1419.4,815.5 1411.3,821.9 1398.4,830.0 1387.1,834.8 1375.8,836.5 1362.9,838.1 1350.0,841.3 1340.3,842.9 1335.5,847.7 1329.0,846.1 1332.3,838.1 1333.9,825.2 1332.3,812.3 1325.8,807.4 1322.6,813.9 1324.2,825.2 1325.8,839.7 1322.6,841.3 1317.7,834.8 1311.3,821.9 1306.5,809.0 1303.2,797.7 1298.4,786.5 1286.0,773.5 1277.5,763.5 1270.1,751.7 1263.7,740.9 1258.0,731.6 1256.5,725.9 1260.0,718.7 1266.1,712.3 1273.7,703.7" fill="#88ccf6"/>
<polygon points="1040.0,930.0 1061.8,938.3 1069.3,944.0 1078.7,949.6 1086.2,959.0 1095.6,974.1 1103.2,989.1 1112.6,1002.3 1120.1,1015.5 1127.6,1026.8 1133.3,1038.0 1133.3,1049.3 1131.4,1060.6 1135.1,1073.8 1137.0,1082.8 1140.0,1100.0 1040.0,1100.0" fill="#88ccf6"/>
<polygon points="1124.3,462.7 1133.3,459.1 1142.2,455.6 1151.2,453.8 1147.6,459.1 1142.2,464.5 1142.2,471.7 1136.9,471.7 1127.9,468.1" fill="#88ccf6"/>
<polygon points="1187.0,475.3 1194.2,475.3 1196.0,484.2 1205.0,498.6 1199.6,507.5 1190.6,502.2 1187.0,489.6" fill="#88ccf6"/>
<polygon points="1188.8,413.0 1193.0,410.8 1197.8,413.5 1195.0,417.9 1190.0,417.0" fill="#88ccf6"/>
<polygon points="1140.8,585.9 1148.7,595.8 1150.7,601.7 1144.8,601.7 1140.8,593.8" fill="#88ccf6"/>
<polygon points="1509.0,237.3 1500.6,241.5 1495.6,246.5 1492.2,254.9 1488.9,264.9 1485.5,275.0 1485.5,286.7 1490.5,285.1 1493.9,271.6 1497.2,258.2 1502.3,246.5 1509.0,239.8" fill="#88ccf6"/>
<polygon points="1515.7,226.4 1520.7,226.4 1524.1,234.8 1530.8,236.4 1527.4,221.4 1554.2,221.4 1550.9,224.7 1537.5,234.8 1534.1,239.8 1524.1,239.8 1520.7,244.8 1517.4,236.4" fill="#88ccf6"/>
<polygon points="1470.4,318.6 1480.5,319.0 1476.0,330.3" fill="#88ccf6"/>
<polygon points="1460.0,353.0 1470.0,352.1 1477.1,368.0 1472.0,375.6 1460.0,374.0 1457.0,365.0" fill="#88ccf6"/>
<polygon points="1333.0,577.0 1340.0,572.5 1347.6,580.0 1342.0,585.5 1334.0,584.0" fill="#88ccf6"/>
<polygon points="1361.0,642.0 1364.4,641.4 1364.0,647.0 1360.6,646.0" fill="#88ccf6"/>
<polygon points="1376.0,708.5 1385.0,711.0 1390.4,716.0 1388.0,719.7 1380.0,715.0" fill="#88ccf6"/>
<polygon points="1560.3,706.0 1565.3,707.7 1573.8,706.9 1580.5,701.8 1583.0,701.8 1578.8,706.0 1572.1,708.6 1565.3,710.3 1561.1,711.1" fill="#88ccf6"/>
<polygon points="1633.7,715.3 1641.3,717.0 1649.7,717.0 1655.6,710.3 1656.5,711.1 1650.5,718.7 1641.3,721.2 1635.4,723.8 1632.8,722.9" fill="#88ccf6"/>
<polygon points="1590.6,742.3 1594.9,744.0 1604.1,749.1 1602.4,752.4 1594.9,752.4 1589.8,751.6 1588.9,745.7" fill="#88ccf6"/>
<polygon points="1148.7,627.0 1156.6,628.0 1154.0,633.0 1148.7,632.0" fill="#88ccf6"/>
<polygon points="1217.5,391.0 1225.0,394.0 1232.0,398.0 1231.0,400.0 1224.0,397.0 1217.0,393.0" fill="#88ccf6"/>
<polygon points="1400.0,537.7 1409.0,538.5 1407.0,542.3 1400.0,541.5" fill="#88ccf6"/>
<polygon points="1494.0,937.0 1494.5,937.0 1494.5,937.5" fill="#f6f5cf"/>
<polyline points="1071.0,316.0 1085.0,318.0 1106.0,325.0 1118.0,327.0 1131.0,330.0 1140.0,331.6 1154.3,341.6 1180.2,340.2 1197.4,347.3 1200.3,357.4 1214.6,366.0 1220.3,367.4 1234.7,386.1 1249.0,387.5 1262.0,371.7 1266.3,367.4" fill="none" stroke="#a3a293" stroke-width="1" opacity="0.85"/>
<polyline points="1214.6,366.0 1218.0,375.0 1221.8,386.1" fill="none" stroke="#a3a293" stroke-width="1" opacity="0.85"/>
<polyline points="1106.0,379.0 1117.0,377.0 1131.0,379.0 1140.0,386.1 1154.3,389.0 1168.7,387.5 1183.0,389.0 1197.4,383.2 1211.7,387.5 1221.8,386.1 1230.0,392.0 1236.0,398.0" fill="none" stroke="#a3a293" stroke-width="1" opacity="0.85"/>
<polyline points="1187.3,389.0 1197.4,400.4 1195.0,412.0 1197.4,422.0 1204.6,433.4 1214.6,440.6 1220.3,450.6" fill="none" stroke="#a3a293" stroke-width="1" opacity="0.85"/>
<polyline points="1148.6,391.8 1152.9,409.0 1157.2,420.5 1171.6,433.4 1185.0,441.0 1198.0,447.0" fill="none" stroke="#a3a293" stroke-width="1" opacity="0.85"/>
<polyline points="1204.6,432.0 1226.1,443.5 1240.4,437.7 1251.9,432.0 1257.6,440.6 1269.1,443.5" fill="none" stroke="#a3a293" stroke-width="1" opacity="0.85"/>
<polyline points="1163.7,441.2 1165.0,452.0 1167.3,468.1 1169.0,480.0 1172.7,493.2 1179.9,507.5 1183.4,525.4 1188.8,536.2 1201.4,541.6 1212.1,545.2 1207.0,556.0 1201.4,570.3 1196.0,586.4 1194.1,600.0 1196.0,611.0 1207.9,615.5 1215.0,625.0 1235.5,637.2 1247.3,655.0 1245.4,674.7 1253.3,676.6 1253.3,690.5 1261.2,698.3 1272.0,700.0" fill="none" stroke="#a3a293" stroke-width="1" opacity="0.85"/>
<polyline points="1061.6,518.3 1084.9,509.3 1108.2,505.7 1120.7,502.2 1129.7,500.4 1147.6,502.2 1161.9,502.2 1172.7,507.5" fill="none" stroke="#a3a293" stroke-width="1" opacity="0.85"/>
<polyline points="1120.7,504.0 1104.6,521.9 1099.2,536.2 1097.4,557.7 1093.8,579.2 1075.9,593.5 1062.0,599.7" fill="none" stroke="#a3a293" stroke-width="1" opacity="0.85"/>
<polyline points="1062.0,647.0 1077.7,650.0 1115.2,672.7 1148.7,700.3 1178.3,722.0 1239.5,727.9 1245.4,739.8 1263.1,739.8" fill="none" stroke="#a3a293" stroke-width="1" opacity="0.85"/>
<polyline points="1233.5,700.3 1245.0,699.0 1261.2,702.3" fill="none" stroke="#a3a293" stroke-width="1" opacity="0.85"/>
<polyline points="1330.8,854.5 1353.2,880.6 1412.8,888.1 1412.8,876.9 1416.5,854.5" fill="none" stroke="#a3a293" stroke-width="1" opacity="0.85"/>
<polyline points="1412.8,888.1 1427.7,903.0 1412.8,951.5 1342.0,977.5 1278.6,985.0 1252.5,999.9 1240.5,1023.0 1231.1,1026.8 1223.6,1019.2 1180.3,1014.5 1159.6,1016.4 1148.3,1012.6 1142.7,1015.5 1142.7,1028.6 1135.1,1039.9" fill="none" stroke="#a3a293" stroke-width="1" opacity="0.85"/>
<polyline points="1342.0,977.5 1368.1,1033.4" fill="none" stroke="#a3a293" stroke-width="1" opacity="0.85"/>
<polyline points="1433.5,268.3 1493.9,249.9 1497.2,253.2 1524.1,270.0 1549.2,288.4 1571.0,316.9 1594.5,312.7 1624.6,314.4 1636.4,309.4 1651.5,321.9 1658.2,333.7 1663.2,333.7 1661.5,352.1 1664.9,363.8 1674.9,389.0 1682.0,392.0" fill="none" stroke="#a3a293" stroke-width="1" opacity="0.85"/>
<polyline points="1433.5,268.3 1433.5,384.0 1421.8,385.6 1410.0,365.5 1400.0,357.1 1390.0,352.0" fill="none" stroke="#a3a293" stroke-width="1" opacity="0.85"/>
<polyline points="1433.5,384.0 1457.0,384.8 1458.7,363.8 1472.1,357.1 1482.1,343.7 1493.9,338.7 1507.3,350.4 1524.1,355.5 1526.0,370.0 1526.9,381.0 1543.2,385.6 1564.2,385.6 1573.5,399.6 1580.5,418.3 1594.5,432.3 1613.1,446.2 1636.4,462.6 1655.0,474.2 1673.7,481.2 1673.7,499.9 1682.0,499.7" fill="none" stroke="#a3a293" stroke-width="1" opacity="0.85"/>
<polyline points="1389.3,499.9 1408.0,488.2 1422.0,478.9 1443.0,474.2 1456.9,475.4 1463.9,481.2 1484.9,487.0 1505.9,492.9 1512.9,504.5 1524.5,509.2 1550.2,520.8 1552.5,537.2 1553.7,549.0 1549.8,562.8 1541.9,582.5 1538.0,590.4 1538.0,608.1 1545.8,608.1 1538.0,618.0 1541.9,637.7 1543.9,661.3 1563.6,665.3 1565.5,677.1 1566.0,680.0 1544.5,705.1 1554.6,715.8 1566.0,738.8 1583.2,747.4 1589.0,748.8 1589.0,771.8 1599.0,774.6 1597.6,787.5 1570.3,797.6 1564.6,809.0 1561.7,826.2" fill="none" stroke="#a3a293" stroke-width="1" opacity="0.85"/>
<polyline points="1554.8,551.1 1578.1,560.5 1594.5,553.5 1594.5,541.8 1613.1,537.2 1627.1,527.8 1634.1,504.5 1657.4,495.2 1673.7,497.5 1682.0,499.7" fill="none" stroke="#a3a293" stroke-width="1" opacity="0.85"/>
<polyline points="1544.5,705.1 1580.4,717.3 1617.6,715.8 1637.7,713.0 1667.8,704.4 1669.2,688.6 1672.0,677.1 1682.0,667.2" fill="none" stroke="#a3a293" stroke-width="1" opacity="0.85"/>
<polyline points="1390.0,352.0 1380.0,340.0 1372.0,338.0" fill="none" stroke="#a3a293" stroke-width="1" opacity="0.85"/>
<line x1="1047.5" y1="220.3" x2="1047.5" y2="1082.5" stroke="rgba(50,50,30,0.34)" stroke-width="2" stroke-dasharray="5 3"/>
<line x1="1115.8" y1="220.3" x2="1115.8" y2="1082.5" stroke="rgba(50,50,30,0.34)" stroke-width="2" stroke-dasharray="5 3"/>
<line x1="1184.0" y1="220.3" x2="1184.0" y2="1082.5" stroke="rgba(50,50,30,0.34)" stroke-width="2" stroke-dasharray="5 3"/>
<line x1="1252.3" y1="220.3" x2="1252.3" y2="1082.5" stroke="rgba(50,50,30,0.34)" stroke-width="2" stroke-dasharray="5 3"/>
<line x1="1320.5" y1="220.3" x2="1320.5" y2="1082.5" stroke="rgba(50,50,30,0.34)" stroke-width="2" stroke-dasharray="5 3"/>
<line x1="1388.8" y1="220.3" x2="1388.8" y2="1082.5" stroke="rgba(50,50,30,0.34)" stroke-width="2" stroke-dasharray="5 3"/>
<line x1="1457.0" y1="220.3" x2="1457.0" y2="1082.5" stroke="rgba(50,50,30,0.34)" stroke-width="2" stroke-dasharray="5 3"/>
<line x1="1525.3" y1="220.3" x2="1525.3" y2="1082.5" stroke="rgba(50,50,30,0.34)" stroke-width="2" stroke-dasharray="5 3"/>
<line x1="1593.5" y1="220.3" x2="1593.5" y2="1082.5" stroke="rgba(50,50,30,0.34)" stroke-width="2" stroke-dasharray="5 3"/>
<line x1="1661.8" y1="220.3" x2="1661.8" y2="1082.5" stroke="rgba(50,50,30,0.34)" stroke-width="2" stroke-dasharray="5 3"/>
<line x1="1062" y1="169.7" x2="1682" y2="169.7" stroke="rgba(50,50,30,0.34)" stroke-width="2" stroke-dasharray="5 3"/>
<line x1="1062" y1="268.9" x2="1682" y2="268.9" stroke="rgba(50,50,30,0.34)" stroke-width="2" stroke-dasharray="5 3"/>
<line x1="1062" y1="363.0" x2="1682" y2="363.0" stroke="rgba(50,50,30,0.34)" stroke-width="2" stroke-dasharray="5 3"/>
<line x1="1062" y1="452.8" x2="1682" y2="452.8" stroke="rgba(50,50,30,0.34)" stroke-width="2" stroke-dasharray="5 3"/>
<line x1="1062" y1="538.8" x2="1682" y2="538.8" stroke="rgba(50,50,30,0.34)" stroke-width="2" stroke-dasharray="5 3"/>
<line x1="1062" y1="621.7" x2="1682" y2="621.7" stroke="rgba(50,50,30,0.34)" stroke-width="2" stroke-dasharray="5 3"/>
<line x1="1062" y1="701.7" x2="1682" y2="701.7" stroke="rgba(50,50,30,0.34)" stroke-width="2" stroke-dasharray="5 3"/>
<line x1="1062" y1="779.4" x2="1682" y2="779.4" stroke="rgba(50,50,30,0.34)" stroke-width="2" stroke-dasharray="5 3"/>
<line x1="1062" y1="855.0" x2="1682" y2="855.0" stroke="rgba(50,50,30,0.34)" stroke-width="2" stroke-dasharray="5 3"/>
<line x1="1062" y1="928.9" x2="1682" y2="928.9" stroke="rgba(50,50,30,0.34)" stroke-width="2" stroke-dasharray="5 3"/>
<line x1="1062" y1="1001.3" x2="1682" y2="1001.3" stroke="rgba(50,50,30,0.34)" stroke-width="2" stroke-dasharray="5 3"/>
<line x1="1062" y1="1072.5" x2="1682" y2="1072.5" stroke="rgba(50,50,30,0.34)" stroke-width="2" stroke-dasharray="5 3"/>
<text x="1116.5" y="362.4" font-family="Liberation Sans" font-size="14.5" font-weight="bold" fill="#6e7a86" letter-spacing="0.6" text-anchor="start" paint-order="stroke" stroke="rgba(255,255,255,0.85)" stroke-width="3" stroke-linejoin="round">GEORGIA</text>
<text x="1199.7" y="416.8" font-family="Liberation Sans" font-size="14.5" font-weight="bold" fill="#6e7a86" letter-spacing="0.6" text-anchor="start" paint-order="stroke" stroke="rgba(255,255,255,0.85)" stroke-width="3" stroke-linejoin="round">AZERBAIJAN</text>
<text x="1452.2" y="452.4" font-family="Liberation Sans" font-size="14.5" font-weight="bold" fill="#6e7a86" letter-spacing="0.5" text-anchor="start" paint-order="stroke" stroke="rgba(255,255,255,0.85)" stroke-width="3" stroke-linejoin="round">TURKMENISTAN</text>
<text x="1549.5" y="372.2" font-family="Liberation Sans" font-size="14.5" font-weight="bold" fill="#6e7a86" letter-spacing="0.5" text-anchor="start" paint-order="stroke" stroke="rgba(255,255,255,0.85)" stroke-width="3" stroke-linejoin="round">UZBEKISTAN</text>
<circle cx="1602.8" cy="243" r="10" fill="none" stroke="#9a9a90" stroke-width="1"/>
<text x="1561" y="241.5" font-family="Liberation Sans" font-size="13" font-weight="bold" fill="#6e7a86" letter-spacing="1.2" text-anchor="start" paint-order="stroke" stroke="rgba(255,255,255,0.85)" stroke-width="3" stroke-linejoin="round">BAYKONUR</text>
<text x="1128" y="615.7" font-family="Liberation Sans" font-size="14.5" font-weight="bold" fill="#6e7a86" letter-spacing="0.6" text-anchor="start" paint-order="stroke" stroke="rgba(255,255,255,0.85)" stroke-width="3" stroke-linejoin="round">IRAQ</text>
<text x="1212.8" y="723.8" font-family="Liberation Sans" font-size="14.5" font-weight="bold" fill="#6e7a86" letter-spacing="0.6" text-anchor="start" paint-order="stroke" stroke="rgba(255,255,255,0.85)" stroke-width="3" stroke-linejoin="round">KUWAIT</text>
<text x="1375.5" y="632.7" font-family="Liberation Sans" font-size="14.5" font-weight="bold" fill="#6e7a86" letter-spacing="0.6" text-anchor="start" paint-order="stroke" stroke="rgba(255,255,255,0.85)" stroke-width="3" stroke-linejoin="round">IRAN</text>
<text x="1610.3" y="601.4" font-family="Liberation Sans" font-size="14.5" font-weight="bold" fill="#6e7a86" letter-spacing="0.6" text-anchor="start" paint-order="stroke" stroke="rgba(255,255,255,0.85)" stroke-width="3" stroke-linejoin="round">AFGHANISTAN</text>
<text x="1276.6" y="808.3" font-family="Liberation Sans" font-size="14.5" font-weight="bold" fill="#6e7a86" letter-spacing="0.6" text-anchor="start" paint-order="stroke" stroke="rgba(255,255,255,0.85)" stroke-width="3" stroke-linejoin="round">BAHRAIN</text>
<text x="1118.4" y="852.8" font-family="Liberation Sans" font-size="14.5" font-weight="bold" fill="#6e7a86" letter-spacing="0.5" text-anchor="start" paint-order="stroke" stroke="rgba(255,255,255,0.85)" stroke-width="3" stroke-linejoin="round">SAUDI ARABIA</text>
<text x="1338.3" y="854.4" font-family="Liberation Sans" font-size="14.5" font-weight="bold" fill="#6e7a86" letter-spacing="0.5" text-anchor="start" paint-order="stroke" stroke="rgba(255,255,255,0.85)" stroke-width="3" stroke-linejoin="round">UNITED ARAB</text>
<text x="1351.3" y="874.4" font-family="Liberation Sans" font-size="14.5" font-weight="bold" fill="#6e7a86" letter-spacing="0.5" text-anchor="start" paint-order="stroke" stroke="rgba(255,255,255,0.85)" stroke-width="3" stroke-linejoin="round">EMIRATES</text>
<text x="1433.3" y="928.9" font-family="Liberation Sans" font-size="14.5" font-weight="bold" fill="#6e7a86" letter-spacing="0.6" text-anchor="start" paint-order="stroke" stroke="rgba(255,255,255,0.85)" stroke-width="3" stroke-linejoin="round">OMAN</text>
<text x="1219" y="1055.4" font-family="Liberation Sans" font-size="14.5" font-weight="bold" fill="#6e7a86" letter-spacing="0.6" text-anchor="start" paint-order="stroke" stroke="rgba(255,255,255,0.85)" stroke-width="3" stroke-linejoin="round">YEMEN</text>
<text x="1164.8" y="386.3" font-family="Liberation Sans" font-size="11.3" font-weight="normal" fill="#263041" letter-spacing="0.6" text-anchor="start" paint-order="stroke" stroke="rgba(255,255,255,0.85)" stroke-width="3" stroke-linejoin="round">Tbilisi</text>
<circle cx="1179" cy="371.3" r="3" fill="#fff" stroke="#111" stroke-width="1.4"/>
<text x="1152.7" y="411.6" font-family="Liberation Sans" font-size="11.3" font-weight="normal" fill="#263041" letter-spacing="0.6" text-anchor="start" paint-order="stroke" stroke="rgba(255,255,255,0.85)" stroke-width="3" stroke-linejoin="round">Yerevan</text>
<text x="1282.4" y="404.9" font-family="Liberation Sans" font-size="10.8" font-weight="normal" fill="#263041" letter-spacing="0.6" text-anchor="start" paint-order="stroke" stroke="rgba(255,255,255,0.85)" stroke-width="3" stroke-linejoin="round">Baku</text>
<text x="1308.7" y="540.9" font-family="Liberation Sans" font-size="12" font-weight="normal" fill="#263041" letter-spacing="0.6" text-anchor="start" paint-order="stroke" stroke="rgba(255,255,255,0.85)" stroke-width="3" stroke-linejoin="round">Tehran</text>
<circle cx="1330" cy="547.6" r="3" fill="#fff" stroke="#111" stroke-width="1.4"/>
<text x="1463.7" y="476.5" font-family="Liberation Sans" font-size="10.8" font-weight="normal" fill="#263041" letter-spacing="0.6" text-anchor="start" paint-order="stroke" stroke="rgba(255,255,255,0.85)" stroke-width="3" stroke-linejoin="round">Ashgabat</text>
<circle cx="1488.1" cy="483.4" r="3" fill="#fff" stroke="#111" stroke-width="1.4"/>
<text x="1485.7" y="523.9" font-family="Liberation Sans" font-size="12" font-weight="normal" fill="#263041" letter-spacing="0.6" text-anchor="start" paint-order="stroke" stroke="rgba(255,255,255,0.85)" stroke-width="3" stroke-linejoin="round">Mashhad</text>
<circle cx="1515.3" cy="531.2" r="3" fill="#fff" stroke="#111" stroke-width="1.4"/>
<text x="1629.6" y="652.5" font-family="Liberation Sans" font-size="10.8" font-weight="normal" fill="#263041" letter-spacing="0.6" text-anchor="start" paint-order="stroke" stroke="rgba(255,255,255,0.85)" stroke-width="3" stroke-linejoin="round">Kandahar</text>
<circle cx="1654.8" cy="659" r="3" fill="#fff" stroke="#111" stroke-width="1.4"/>
<text x="1652.6" y="426.3" font-family="Liberation Sans" font-size="10.8" font-weight="normal" fill="#263041" letter-spacing="0.6" text-anchor="start" paint-order="stroke" stroke="rgba(255,255,255,0.85)" stroke-width="3" stroke-linejoin="round">Samarkand</text>
<circle cx="1680" cy="433" r="3" fill="#fff" stroke="#111" stroke-width="1.4"/>
<text x="1140.8" y="629.1" font-family="Liberation Sans" font-size="12" font-weight="normal" fill="#263041" letter-spacing="0.6" text-anchor="start" paint-order="stroke" stroke="rgba(255,255,255,0.85)" stroke-width="3" stroke-linejoin="round">Baghdad</text>
<circle cx="1170.4" cy="611.6" r="3" fill="#fff" stroke="#111" stroke-width="1.4"/>
<text x="1315.9" y="623.0" font-family="Liberation Sans" font-size="10.8" font-weight="normal" fill="#263041" letter-spacing="0.6" text-anchor="start" paint-order="stroke" stroke="rgba(255,255,255,0.85)" stroke-width="3" stroke-linejoin="round">Isfahan</text>
<circle cx="1336.4" cy="629.5" r="3" fill="#fff" stroke="#111" stroke-width="1.4"/>
<text x="1340.1" y="704.4" font-family="Liberation Sans" font-size="10.8" font-weight="normal" fill="#263041" letter-spacing="0.6" text-anchor="start" paint-order="stroke" stroke="rgba(255,255,255,0.85)" stroke-width="3" stroke-linejoin="round">Shiraz</text>
<text x="1229.6" y="711.3" font-family="Liberation Sans" font-size="12" font-weight="normal" fill="#263041" letter-spacing="0.6" text-anchor="start" paint-order="stroke" stroke="rgba(255,255,255,0.85)" stroke-width="3" stroke-linejoin="round">Kuwait</text>
<text x="1201.5" y="832.2" font-family="Liberation Sans" font-size="12" font-weight="normal" fill="#263041" letter-spacing="0.6" text-anchor="start" paint-order="stroke" stroke="rgba(255,255,255,0.85)" stroke-width="3" stroke-linejoin="round">Riyadh</text>
<circle cx="1223.8" cy="838.9" r="3" fill="#fff" stroke="#111" stroke-width="1.4"/>
<text x="1370" y="837.0" font-family="Liberation Sans" font-size="10.8" font-weight="normal" fill="#263041" letter-spacing="0.6" text-anchor="start" paint-order="stroke" stroke="rgba(255,255,255,0.85)" stroke-width="3" stroke-linejoin="round">Abu Dhabi</text>
<text x="1412.8" y="817.0" font-family="Liberation Sans" font-size="10.8" font-weight="normal" fill="#263041" letter-spacing="0.6" text-anchor="start" paint-order="stroke" stroke="rgba(255,255,255,0.85)" stroke-width="3" stroke-linejoin="round">Dubai</text>
<text x="1474.3" y="858.0" font-family="Liberation Sans" font-size="10.8" font-weight="normal" fill="#263041" letter-spacing="0.6" text-anchor="start" paint-order="stroke" stroke="rgba(255,255,255,0.85)" stroke-width="3" stroke-linejoin="round">Muscat</text>
<circle cx="1493" cy="864.6" r="3" fill="#fff" stroke="#111" stroke-width="1.4"/>
<text x="1658.8" y="826.3" font-family="Liberation Sans" font-size="12" font-weight="normal" fill="#263041" letter-spacing="0.6" text-anchor="start" paint-order="stroke" stroke="rgba(255,255,255,0.85)" stroke-width="3" stroke-linejoin="round">Karachi</text>
<text x="1145.5" y="1057.4" font-family="Liberation Sans" font-size="12" font-weight="normal" fill="#263041" letter-spacing="0.6" text-anchor="start" paint-order="stroke" stroke="rgba(255,255,255,0.85)" stroke-width="3" stroke-linejoin="round">Sanaa</text>
<circle cx="1165.2" cy="1064" r="3" fill="#fff" stroke="#111" stroke-width="1.4"/>
<text x="1076.8" y="909.7" font-family="Liberation Sans" font-size="12" font-weight="normal" fill="#263041" letter-spacing="0.6" text-anchor="end" paint-order="stroke" stroke="rgba(255,255,255,0.85)" stroke-width="3" stroke-linejoin="round">Jeddah</text>
<circle cx="1065.5" cy="918.2" r="3" fill="#fff" stroke="#111" stroke-width="1.4"/>
<text x="1086.2" y="933.7" font-family="Liberation Sans" font-size="12" font-weight="normal" fill="#263041" letter-spacing="0.6" text-anchor="end" paint-order="stroke" stroke="rgba(255,255,255,0.85)" stroke-width="3" stroke-linejoin="round">Makkah</text>
<path d="M1186 440 Q1290 580 1400 790" fill="none" stroke="#b3b2a0" stroke-width="3.6" stroke-dasharray="0.1 8.2" stroke-linecap="round"/>
<polyline points="1169.8,418.8 1180.0,425.0 1203.0,437.0 1215.3,455.2 1223.1,465.6 1228.3,471.6 1237.4,485.1 1247.0,498.1 1260.0,516.6 1267.4,525.2 1305.8,565.8 1308.8,575.1 1320.4,608.7 1327.1,624.7 1330.1,633.2 1337.1,654.5 1340.9,664.6 1346.8,685.0 1356.9,714.1 1363.6,742.8 1370.0,770.0 1374.0,783.7 1379.9,791.0 1382.9,796.0 1387.8,802.4 1392.2,806.3 1426.7,821.1" fill="none" stroke="#000" stroke-width="2"/>
<polyline points="1392,806 1405,811 1418,816 1426,821" fill="none" stroke="#000" stroke-width="8"/>
<polyline points="1426,821 1415,830 1403,844" fill="none" stroke="#000" stroke-width="1.5"/>
<rect x="1165.8" y="414.8" width="8" height="8" fill="#000"/>
<rect x="1211.3" y="451.2" width="8" height="8" fill="#000"/>
<rect x="1219.1" y="461.6" width="8" height="8" fill="#000"/>
<rect x="1224.3" y="467.6" width="8" height="8" fill="#000"/>
<rect x="1233.4" y="481.1" width="8" height="8" fill="#000"/>
<rect x="1243.0" y="494.1" width="8" height="8" fill="#000"/>
<rect x="1256.0" y="512.6" width="8" height="8" fill="#000"/>
<rect x="1263.4" y="521.2" width="8" height="8" fill="#000"/>
<rect x="1301.8" y="561.8" width="8" height="8" fill="#000"/>
<rect x="1304.8" y="571.1" width="8" height="8" fill="#000"/>
<rect x="1316.4" y="604.7" width="8" height="8" fill="#000"/>
<rect x="1323.1" y="620.7" width="8" height="8" fill="#000"/>
<rect x="1326.1" y="629.2" width="8" height="8" fill="#000"/>
<rect x="1333.1" y="650.5" width="8" height="8" fill="#000"/>
<rect x="1336.9" y="660.6" width="8" height="8" fill="#000"/>
<rect x="1342.8" y="681.0" width="8" height="8" fill="#000"/>
<rect x="1352.9" y="710.1" width="8" height="8" fill="#000"/>
<rect x="1359.6" y="738.8" width="8" height="8" fill="#000"/>
<rect x="1366.0" y="766.0" width="8" height="8" fill="#000"/>
<rect x="1370.0" y="779.7" width="8" height="8" fill="#000"/>
<rect x="1375.9" y="787.0" width="8" height="8" fill="#000"/>
<rect x="1378.9" y="792.0" width="8" height="8" fill="#000"/>
<rect x="1383.8" y="798.4" width="8" height="8" fill="#000"/>
<rect x="1416.0" y="810.0" width="8" height="8" fill="#000"/>
<rect x="1419.0" y="814.0" width="8" height="8" fill="#000"/>
<rect x="1413.0" y="816.0" width="8" height="8" fill="#000"/>
<rect x="1399.0" y="840.0" width="8" height="8" fill="#000"/>
<rect x="1422.7" y="805.3" width="6" height="6" fill="#fff" fill-opacity="0.3" stroke="#000" stroke-width="1"/>
<rect x="1398.6" y="810.7" width="6" height="6" fill="#fff" fill-opacity="0.3" stroke="#000" stroke-width="1"/>
<rect x="1410.0" y="825.5" width="6" height="6" fill="#fff" fill-opacity="0.3" stroke="#000" stroke-width="1"/>
<rect x="1384.8" y="835.8" width="6" height="6" fill="#fff" fill-opacity="0.3" stroke="#000" stroke-width="1"/>
<rect x="1388.7" y="838.8" width="6" height="6" fill="#fff" fill-opacity="0.3" stroke="#000" stroke-width="1"/>
<rect x="1393.2" y="840.3" width="6" height="6" fill="#fff" fill-opacity="0.3" stroke="#000" stroke-width="1"/>
<rect x="1170.9" y="420.3" width="35.09999999999991" height="16.399999999999977" fill="#bde2f6" stroke="#111" stroke-width="1.2"/>
<text x="1188.45" y="432.5" font-family="Liberation Sans" font-size="11" fill="#111" text-anchor="middle" letter-spacing="0.4">UDYZ</text>
<rect x="1424.3" y="823.6" width="33.0" height="15.199999999999932" fill="#bde2f6" stroke="#111" stroke-width="1.2"/>
<text x="1440.8" y="835.2" font-family="Liberation Sans" font-size="11" fill="#111" text-anchor="middle" letter-spacing="0.4">OMSJ</text>
<rect x="1405" y="845.7" width="37.5" height="15.799999999999955" fill="#bde2f6" stroke="#111" stroke-width="1.2"/>
<text x="1423.75" y="857.6" font-family="Liberation Sans" font-size="11" fill="#111" text-anchor="middle" letter-spacing="0.4">OMAA</text>
<rect x="1050.55" y="224.5" width="30" height="13" fill="#4f4f4a"/>
<text x="1065.55" y="234.8" font-family="Liberation Sans" font-size="10.5" font-weight="bold" fill="#fff" text-anchor="middle">39.0E</text>
<rect x="1050.55" y="1066" width="30" height="13" fill="#4f4f4a"/>
<text x="1065.55" y="1076.3" font-family="Liberation Sans" font-size="10.5" font-weight="bold" fill="#fff" text-anchor="middle">39.0E</text>
<rect x="1118.8" y="224.5" width="30" height="13" fill="#4f4f4a"/>
<text x="1133.8" y="234.8" font-family="Liberation Sans" font-size="10.5" font-weight="bold" fill="#fff" text-anchor="middle">42.0E</text>
<rect x="1118.8" y="1066" width="30" height="13" fill="#4f4f4a"/>
<text x="1133.8" y="1076.3" font-family="Liberation Sans" font-size="10.5" font-weight="bold" fill="#fff" text-anchor="middle">42.0E</text>
<rect x="1187.05" y="224.5" width="30" height="13" fill="#4f4f4a"/>
<text x="1202.05" y="234.8" font-family="Liberation Sans" font-size="10.5" font-weight="bold" fill="#fff" text-anchor="middle">45.0E</text>
<rect x="1187.05" y="1066" width="30" height="13" fill="#4f4f4a"/>
<text x="1202.05" y="1076.3" font-family="Liberation Sans" font-size="10.5" font-weight="bold" fill="#fff" text-anchor="middle">45.0E</text>
<rect x="1255.3" y="224.5" width="30" height="13" fill="#4f4f4a"/>
<text x="1270.3" y="234.8" font-family="Liberation Sans" font-size="10.5" font-weight="bold" fill="#fff" text-anchor="middle">48.0E</text>
<rect x="1255.3" y="1066" width="30" height="13" fill="#4f4f4a"/>
<text x="1270.3" y="1076.3" font-family="Liberation Sans" font-size="10.5" font-weight="bold" fill="#fff" text-anchor="middle">48.0E</text>
<rect x="1323.55" y="224.5" width="30" height="13" fill="#4f4f4a"/>
<text x="1338.55" y="234.8" font-family="Liberation Sans" font-size="10.5" font-weight="bold" fill="#fff" text-anchor="middle">51.0E</text>
<rect x="1323.55" y="1066" width="30" height="13" fill="#4f4f4a"/>
<text x="1338.55" y="1076.3" font-family="Liberation Sans" font-size="10.5" font-weight="bold" fill="#fff" text-anchor="middle">51.0E</text>
<rect x="1391.8" y="224.5" width="30" height="13" fill="#4f4f4a"/>
<text x="1406.8" y="234.8" font-family="Liberation Sans" font-size="10.5" font-weight="bold" fill="#fff" text-anchor="middle">54.0E</text>
<rect x="1391.8" y="1066" width="30" height="13" fill="#4f4f4a"/>
<text x="1406.8" y="1076.3" font-family="Liberation Sans" font-size="10.5" font-weight="bold" fill="#fff" text-anchor="middle">54.0E</text>
<rect x="1460.05" y="224.5" width="30" height="13" fill="#4f4f4a"/>
<text x="1475.05" y="234.8" font-family="Liberation Sans" font-size="10.5" font-weight="bold" fill="#fff" text-anchor="middle">57.0E</text>
<rect x="1460.05" y="1066" width="30" height="13" fill="#4f4f4a"/>
<text x="1475.05" y="1076.3" font-family="Liberation Sans" font-size="10.5" font-weight="bold" fill="#fff" text-anchor="middle">57.0E</text>
<rect x="1528.3" y="224.5" width="30" height="13" fill="#4f4f4a"/>
<text x="1543.3" y="234.8" font-family="Liberation Sans" font-size="10.5" font-weight="bold" fill="#fff" text-anchor="middle">60.0E</text>
<rect x="1528.3" y="1066" width="30" height="13" fill="#4f4f4a"/>
<text x="1543.3" y="1076.3" font-family="Liberation Sans" font-size="10.5" font-weight="bold" fill="#fff" text-anchor="middle">60.0E</text>
<rect x="1596.55" y="224.5" width="30" height="13" fill="#4f4f4a"/>
<text x="1611.55" y="234.8" font-family="Liberation Sans" font-size="10.5" font-weight="bold" fill="#fff" text-anchor="middle">63.0E</text>
<rect x="1596.55" y="1066" width="30" height="13" fill="#4f4f4a"/>
<text x="1611.55" y="1076.3" font-family="Liberation Sans" font-size="10.5" font-weight="bold" fill="#fff" text-anchor="middle">63.0E</text>
<rect x="1664.8" y="224.5" width="30" height="13" fill="#4f4f4a"/>
<text x="1679.8" y="234.8" font-family="Liberation Sans" font-size="10.5" font-weight="bold" fill="#fff" text-anchor="middle">66.0E</text>
<rect x="1664.8" y="1066" width="30" height="13" fill="#4f4f4a"/>
<text x="1679.8" y="1076.3" font-family="Liberation Sans" font-size="10.5" font-weight="bold" fill="#fff" text-anchor="middle">66.0E</text>
<rect x="1064" y="273.3805301383031" width="30" height="13" fill="#4f4f4a"/>
<text x="1079.0" y="283.6805301383031" font-family="Liberation Sans" font-size="10.5" font-weight="bold" fill="#fff" text-anchor="middle">45.0N</text>
<rect x="1064" y="367.5" width="30" height="13" fill="#4f4f4a"/>
<text x="1079.0" y="377.8" font-family="Liberation Sans" font-size="10.5" font-weight="bold" fill="#fff" text-anchor="middle">42.0N</text>
<rect x="1064" y="457.2799118978634" width="30" height="13" fill="#4f4f4a"/>
<text x="1079.0" y="467.57991189786344" font-family="Liberation Sans" font-size="10.5" font-weight="bold" fill="#fff" text-anchor="middle">39.0N</text>
<rect x="1064" y="543.3285633418303" width="30" height="13" fill="#4f4f4a"/>
<text x="1079.0" y="553.6285633418303" font-family="Liberation Sans" font-size="10.5" font-weight="bold" fill="#fff" text-anchor="middle">36.0N</text>
<rect x="1064" y="626.161955599435" width="30" height="13" fill="#4f4f4a"/>
<text x="1079.0" y="636.461955599435" font-family="Liberation Sans" font-size="10.5" font-weight="bold" fill="#fff" text-anchor="middle">33.0N</text>
<rect x="1064" y="706.2234629237673" width="30" height="13" fill="#4f4f4a"/>
<text x="1079.0" y="716.5234629237673" font-family="Liberation Sans" font-size="10.5" font-weight="bold" fill="#fff" text-anchor="middle">30.0N</text>
<rect x="1064" y="783.8987791327943" width="30" height="13" fill="#4f4f4a"/>
<text x="1079.0" y="794.1987791327942" font-family="Liberation Sans" font-size="10.5" font-weight="bold" fill="#fff" text-anchor="middle">27.0N</text>
<rect x="1064" y="859.5274740188521" width="30" height="13" fill="#4f4f4a"/>
<text x="1079.0" y="869.8274740188521" font-family="Liberation Sans" font-size="10.5" font-weight="bold" fill="#fff" text-anchor="middle">24.0N</text>
<rect x="1064" y="933.4120790750685" width="30" height="13" fill="#4f4f4a"/>
<text x="1079.0" y="943.7120790750685" font-family="Liberation Sans" font-size="10.5" font-weight="bold" fill="#fff" text-anchor="middle">21.0N</text>
<rect x="1064" y="1005.8253503289473" width="30" height="13" fill="#4f4f4a"/>
<text x="1079.0" y="1016.1253503289472" font-family="Liberation Sans" font-size="10.5" font-weight="bold" fill="#fff" text-anchor="middle">18.0N</text>
<rect x="1064" y="1077.016173791423" width="30" height="13" fill="#4f4f4a"/>
<text x="1079.0" y="1087.316173791423" font-family="Liberation Sans" font-size="10.5" font-weight="bold" fill="#fff" text-anchor="middle">15.0N</text>
</g></svg>
<div class="a" style="left:1073.5px;top:232.5px;width:30.5px;height:61px;background:#fff;border:1.5px solid rgba(0,0,0,.25);border-radius:3px"></div>
<div class="a" style="left:1075px;top:262.5px;width:27.5px;height:1px;background:#ccc"></div>
<div class="a" style="left:1073.5px;top:233px;width:30.5px;height:30px;text-align:center;line-height:30px;font-size:20px;font-weight:bold;color:#111">+</div>
<div class="a" style="left:1073.5px;top:263px;width:30.5px;height:30px;text-align:center;line-height:30px;font-size:20px;font-weight:bold;color:#111">&#8211;</div>
<div class="a" style="left:1465px;top:1063px;width:217px;height:19.5px;background:rgba(250,250,250,.96)"></div>
<div class="a" style="left:1470px;top:1063.5px;height:19px;line-height:19px;font-size:12.2px;color:#333;white-space:nowrap"><i style="font-family:'Liberation Serif';font-weight:bold;font-size:13px;color:#222">Leaflet</i><span style="display:inline-block;width:7px;height:9px;background:#e8c43a;margin:0 3px 0 2px;transform:skew(-20deg);box-shadow:-2px 2px 0 #2456b5"></span> <span style="color:#777">|</span> © OpenStreetMap contributors</div>
<div class="a" style="left:1065.3px;top:188.3px;width:44.40000000000009px;height:23.6px;background:#2a9fd8;border-radius:4px"></div>
<div class="a" style="left:1071.1px;top:192.8px;width:32.700000000000045px;height:13.4px;background:#fff;border-radius:2px;font-size:8.2px;font-weight:bold;color:#4a8fb2;letter-spacing:0.1px;text-align:center;line-height:13.4px;white-space:nowrap">ROUTE</div>
<div class="a" style="left:1113.1px;top:188.3px;width:43.80000000000018px;height:23.6px;background:#3b3c3e;border-radius:4px"></div>
<div class="a" style="left:1119px;top:192.8px;width:31.700000000000045px;height:13.4px;background:#fff;border-radius:2px;font-size:8.2px;font-weight:bold;color:#333;letter-spacing:0.1px;text-align:center;line-height:13.4px;white-space:nowrap">ETOPS</div>
<div class="a" style="left:1160.3px;top:188.3px;width:22.600000000000136px;height:23.6px;background:#3b3c3e;border-radius:4px"></div>
<div class="a" style="left:1186.3px;top:188.3px;width:22.5px;height:23.6px;background:#3b3c3e;border-radius:4px"></div>
<div class="a" style="left:1212.2px;top:188.3px;width:22.59999999999991px;height:23.6px;background:#3b3c3e;border-radius:4px"></div>
<div class="a" style="left:1238.2px;top:188.3px;width:22.59999999999991px;height:23.6px;background:#3b3c3e;border-radius:4px"></div>
<div class="a" style="left:1264px;top:188.3px;width:22.59999999999991px;height:23.6px;background:#3b3c3e;border-radius:4px"></div>
<div class="a" style="left:1290.4px;top:188.3px;width:38.09999999999991px;height:23.6px;background:#3b3c3e;border-radius:4px"></div>
<div class="a" style="left:1295.5px;top:192.8px;width:28.0px;height:13.4px;background:#fff;border-radius:2px;font-size:8.2px;font-weight:bold;color:#333;letter-spacing:0.1px;text-align:center;line-height:13.4px;white-space:nowrap">NATS</div>
<div class="a" style="left:1332.4px;top:188.3px;width:48.09999999999991px;height:23.6px;background:#3b3c3e;border-radius:4px"></div>
<div class="a" style="left:1337.5px;top:192.8px;width:38.0px;height:13.4px;background:#fff;border-radius:2px;font-size:8.2px;font-weight:bold;color:#333;letter-spacing:0.1px;text-align:center;line-height:13.4px;white-space:nowrap">PACOTS</div>
<div class="a" style="left:1384.3px;top:188.3px;width:29.40000000000009px;height:23.6px;background:#3b3c3e;border-radius:4px"></div>
<div class="a" style="left:1389px;top:192.8px;width:20px;height:13.4px;background:#fff;border-radius:2px;font-size:8.2px;font-weight:bold;color:#333;letter-spacing:0.1px;text-align:center;line-height:13.4px;white-space:nowrap">FIR</div>
<div class="a" style="left:1417.1px;top:188.3px;width:31.300000000000182px;height:23.6px;background:#3b3c3e;border-radius:4px"></div>
<div class="a" style="left:1422px;top:192.8px;width:21.5px;height:13.4px;background:#fff;border-radius:2px;font-size:8.2px;font-weight:bold;color:#333;letter-spacing:0.1px;text-align:center;line-height:13.4px;white-space:nowrap">UIR</div>
<div class="a" style="left:1452.2px;top:188.3px;width:22.200000000000045px;height:23.6px;background:#3b3c3e;border-radius:4px"></div>
<div class="a" style="left:1478.2px;top:188.3px;width:22.09999999999991px;height:23.6px;background:#3b3c3e;border-radius:4px"></div>
<div class="a" style="left:1504.1px;top:188.3px;width:22.5px;height:23.6px;background:#3b3c3e;border-radius:4px"></div>
<svg style="left:1160.3px;top:189px" width="22" height="22"><g transform="rotate(35 11 11)"><path d="M9.5 3.5h3v5l4.5 2.5v2l-4.5-1.2v3.7l1.8 1.5v1.5l-3.3-1-3.3 1v-1.5l1.8-1.5v-3.7L5 13v-2l4.5-2.5z" fill="none" stroke="#eee" stroke-width="1.2" stroke-linejoin="round"/></g></svg>
<svg style="left:1186.3px;top:189px" width="22" height="22"><polygon points="18.5,11 14.75,17.2 7.25,17.2 3.5,11 7.25,4.8 14.75,4.8" fill="none" stroke="#ddd" stroke-width="1.1"/><circle cx="11" cy="11" r="1" fill="#fff"/></svg>
<svg style="left:1212.2px;top:189px" width="22" height="22"><circle cx="11" cy="11" r="6" fill="none" stroke="#aaa" stroke-width="1"/><circle cx="11" cy="11" r="4" fill="none" stroke="#aaa" stroke-width="1"/><circle cx="11" cy="11" r="2" fill="none" stroke="#aaa" stroke-width="1"/></svg>
<svg style="left:1238.2px;top:189px" width="22" height="22"><path d="M11 4l6.5 12h-13z" fill="none" stroke="#fff" stroke-width="1.3"/></svg>
<svg style="left:1264px;top:189px" width="22" height="22"><path d="M4.5 17.5L17.5 4.5" stroke="#ddd" stroke-width="1.3"/><path d="M8.5 13.5L13.5 8.5" stroke="#fff" stroke-width="4.2" stroke-linecap="round"/></svg>
<svg style="left:1452.2px;top:189px" width="22" height="22"><path d="M11 4c-3 4-5 6-5 9a5 5 0 0 0 10 0c0-3-2-5-5-9z" fill="none" stroke="#fff" stroke-width="1.2"/></svg>
<svg style="left:1478.2px;top:189px" width="22" height="22"><path d="M7 15h9a3 3 0 0 0 0-6 4 4 0 0 0-8-1 3.5 3.5 0 0 0-1 7z" fill="none" stroke="#fff" stroke-width="1.2"/></svg>
<svg style="left:1504.1px;top:189px" width="22" height="22"><path d="M5 17L15 6" stroke="#fff" stroke-width="1.5"/><path d="M13 4l4 3-3 1z" fill="#fff"/></svg>
</body></html>
